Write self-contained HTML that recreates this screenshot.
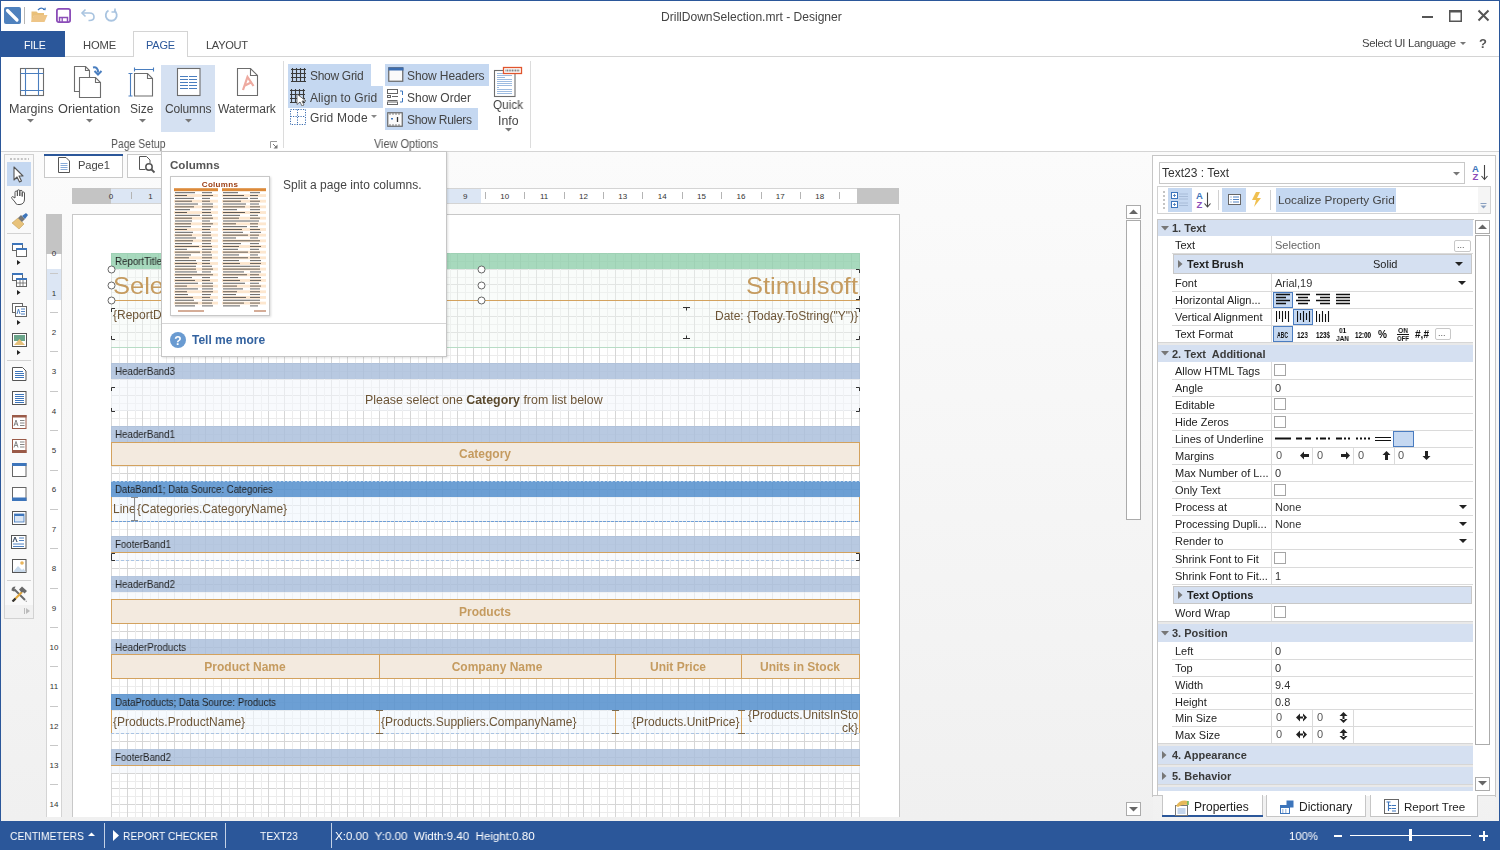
<!DOCTYPE html><html><head><meta charset="utf-8"><style>
html,body{margin:0;padding:0;width:1500px;height:850px;overflow:hidden;background:#fff;}
body{position:relative;font-family:"Liberation Sans",sans-serif;}
.r{position:absolute;box-sizing:border-box;}
.t{position:absolute;white-space:nowrap;line-height:1;will-change:transform;}
svg{shape-rendering:geometricPrecision;}
</style></head><body>
<div class="r" style="left:0px;top:0px;width:1500px;height:1px;background:#2b579a;"></div>
<div class="r" style="left:0px;top:0px;width:1px;height:850px;background:#2b579a;"></div>
<div class="r" style="left:1499px;top:0px;width:1px;height:850px;background:#2b579a;"></div>
<svg class="r" style="left:4px;top:7px;" width="17" height="17" viewBox="0 0 17 17"><rect x="0" y="0" width="17" height="17" rx="2" fill="#4f81bd"/><path d="M3.5 3.5 L13 13" stroke="#fff" stroke-width="3.2" stroke-linecap="round"/><path d="M3 3 L5 4" stroke="#fff" stroke-width="1"/></svg>
<div class="r" style="left:24px;top:7px;width:1px;height:17px;background:#b5b5b5;"></div>
<svg class="r" style="left:30px;top:6px;" width="19" height="17" viewBox="0 0 19 17"><path d="M1.5 5.5 h5 l1.5 1.5 h6 v2.5 h-10 l-2.5 6.5z" fill="#e9c07a"/><path d="M1 16 L4 9 h13.5 l-3 7z" fill="#eec587"/><path d="M8 4 q3 -3.5 6.5 -0.5" stroke="#3d75bb" stroke-width="1.3" fill="none"/><path d="M13 3.5 l2 0.2 l0.2 -2" stroke="#3d75bb" stroke-width="1.2" fill="none"/></svg>
<svg class="r" style="left:56px;top:8px;" width="15" height="15" viewBox="0 0 15 15"><rect x="0.9" y="0.9" width="13.2" height="13.2" rx="1.8" fill="#fff" stroke="#8b4db8" stroke-width="1.8"/><path d="M3.5 14 v-4.5 h8 v4.5" fill="none" stroke="#8b4db8" stroke-width="1.5"/><path d="M6.2 10 v4" stroke="#8b4db8" stroke-width="1.3"/></svg>
<svg class="r" style="left:80px;top:8px;" width="16" height="14" viewBox="0 0 16 14"><path d="M2.5 5 h7 q4.5 0 4.5 4 q0 3.5 -4.5 3.5 h-1" stroke="#a9c4e0" stroke-width="1.6" fill="none"/><path d="M5.5 1.5 L2 5 L5.5 8.5" stroke="#a9c4e0" stroke-width="1.6" fill="none"/></svg>
<svg class="r" style="left:104px;top:8px;" width="15" height="15" viewBox="0 0 15 15"><path d="M10 2.5 A5.5 5.5 0 1 1 4.5 2.5" stroke="#a9c4e0" stroke-width="1.8" fill="none"/><path d="M11 0.5 v3.5 h-3.5" stroke="#a9c4e0" stroke-width="1.6" fill="none"/></svg>
<div class="t" style="left:661px;top:10.80px;font-size:12.05px;color:#444;">DrillDownSelection.mrt - Designer</div>
<div class="r" style="left:1422px;top:16px;width:11px;height:2px;background:#555;"></div>
<svg class="r" style="left:1449px;top:10px;" width="13" height="12" viewBox="0 0 13 12"><rect x="0.75" y="0.75" width="11.5" height="10.5" fill="none" stroke="#555" stroke-width="1.5"/><rect x="0" y="0" width="13" height="2.5" fill="#555"/></svg>
<svg class="r" style="left:1477px;top:9px;" width="13" height="13" viewBox="0 0 13 13"><path d="M1.5 1.5 L11.5 11.5 M11.5 1.5 L1.5 11.5" stroke="#555" stroke-width="2"/></svg>
<div class="r" style="left:1px;top:31px;width:64px;height:26px;background:#2b579a;"></div>
<div class="t" style="left:23.5px;top:40.03px;font-size:10.6px;color:#fff;letter-spacing:-0.2px;">FILE</div>
<div class="t" style="left:82.5px;top:39.52px;font-size:11.2px;color:#444;letter-spacing:-0.1px;">HOME</div>
<div class="r" style="left:65px;top:56px;width:1434px;height:1px;background:#d4d4d4;"></div>
<div class="r" style="left:133px;top:31px;width:55px;height:26px;background:#fff;border:1px solid #d4d4d4;border-bottom:none;"></div>
<div class="t" style="left:145.8px;top:39.69px;font-size:11px;color:#2b579a;letter-spacing:-0.2px;">PAGE</div>
<div class="t" style="left:205.5px;top:39.60px;font-size:11.1px;color:#444;letter-spacing:-0.3px;">LAYOUT</div>
<div class="t" style="left:1362px;top:38.43px;font-size:11.3px;color:#444;letter-spacing:-0.3px;">Select UI Language</div>
<svg class="r" style="left:1460px;top:42px;" width="6" height="4" viewBox="0 0 6 4"><path d="M0 0 h6 l-3 3z" fill="#777"/></svg>
<div class="t" style="left:1478.5px;top:36.50px;font-size:13px;color:#555;font-weight:bold;">?</div>
<div class="r" style="left:1px;top:151px;width:1498px;height:1px;background:#d5d5d5;"></div>
<svg class="r" style="left:19px;top:67px;" width="26" height="31" viewBox="0 0 26 31"><rect x="1.5" y="1.5" width="23" height="27" fill="#fff" stroke="#6d6d6d" stroke-width="1.1"/><path d="M1.5 6.5 h23 M1.5 23.5 h23 M6.5 1.5 v27 M19.5 1.5 v27" stroke="#4a7ebf" stroke-width="1.1"/></svg>
<div class="t" style="left:9px;top:102.84px;font-size:12px;color:#444;transform:scaleX(1.0450);transform-origin:0 0;">Margins</div>
<svg class="r" style="left:27px;top:119px;" width="7" height="4" viewBox="0 0 7 4"><path d="M0 0 h7 l-3.5 3.5z" fill="#777"/></svg>
<svg class="r" style="left:72px;top:66px;" width="33" height="33" viewBox="0 0 33 33"><path d="M2.5 0.5 h11 l4 4 v21 h-15z" fill="#fff" stroke="#6d6d6d" stroke-width="1.1"/><path d="M7.5 11.5 h16 l5 5 v15 h-21z" fill="#fff" stroke="#6d6d6d" stroke-width="1.1"/><path d="M23.5 11.5 v5 h5" fill="none" stroke="#6d6d6d" stroke-width="1.1"/><path d="M13.5 0.5 v4 h4" fill="none" stroke="#6d6d6d" stroke-width="1.1"/><path d="M21 1.5 q5 -1 5 5" fill="none" stroke="#4a7ebf" stroke-width="2"/><path d="M22.5 5 l3.5 3.5 l3.5 -3.5" fill="none" stroke="#4a7ebf" stroke-width="2"/></svg>
<div class="t" style="left:58.3px;top:102.84px;font-size:12px;color:#444;transform:scaleX(1.0597);transform-origin:0 0;">Orientation</div>
<svg class="r" style="left:86px;top:119px;" width="7" height="4" viewBox="0 0 7 4"><path d="M0 0 h7 l-3.5 3.5z" fill="#777"/></svg>
<svg class="r" style="left:128px;top:67px;" width="27" height="31" viewBox="0 0 27 31"><path d="M6.5 6.5 h13 l5 5 v17.5 h-18z" fill="#fff" stroke="#6d6d6d" stroke-width="1.1"/><path d="M19.5 6.5 v5 h5" fill="none" stroke="#6d6d6d" stroke-width="1.1"/><path d="M6.5 2.5 h19 M6.5 0.5 v4 M25.5 0.5 v4 M2.5 6.5 v22.5 M0.5 6.5 h4 M0.5 29 h4" stroke="#4a7ebf" stroke-width="1.1"/></svg>
<div class="t" style="left:130px;top:102.84px;font-size:12px;color:#444;">Size</div>
<svg class="r" style="left:139px;top:119px;" width="7" height="4" viewBox="0 0 7 4"><path d="M0 0 h7 l-3.5 3.5z" fill="#777"/></svg>
<div class="r" style="left:161px;top:65px;width:54px;height:67px;background:#d5e1f2;"></div>
<svg class="r" style="left:176px;top:67px;" width="26" height="30" viewBox="0 0 26 30"><rect x="1.5" y="1.5" width="22.5" height="27" fill="#fff" stroke="#6d6d6d" stroke-width="1.1"/><path d="M4 9.5 h8 M13 9.5 h8 M4 12.5 h8 M13 12.5 h8 M4 15.5 h8 M13 15.5 h8 M4 18.5 h8 M13 18.5 h8 M4 21.5 h8 M13 21.5 h8" stroke="#4a7ebf" stroke-width="1.1"/></svg>
<div class="t" style="left:164.5px;top:102.84px;font-size:12px;color:#444;letter-spacing:-0.15px;">Columns</div>
<svg class="r" style="left:185px;top:119px;" width="7" height="4" viewBox="0 0 7 4"><path d="M0 0 h7 l-3.5 3.5z" fill="#777"/></svg>
<svg class="r" style="left:236px;top:67px;" width="24" height="31" viewBox="0 0 24 31"><path d="M1.5 1.5 h13 l7 7 v20 h-20z" fill="#fff" stroke="#6d6d6d" stroke-width="1.1"/><path d="M14.5 1.5 v7 h7" fill="none" stroke="#6d6d6d" stroke-width="1.1"/><path d="M7 23 L11.5 10 L17.5 19 M8 19 L16 15" fill="none" stroke="#eeaaa0" stroke-width="2.2"/></svg>
<div class="t" style="left:218px;top:102.84px;font-size:12px;color:#444;letter-spacing:-0.05px;">Watermark</div>
<div class="t" style="left:110.5px;top:137.64px;font-size:12px;color:#555;transform:scaleX(0.8690);transform-origin:0 0;">Page Setup</div>
<svg class="r" style="left:270px;top:141px;" width="8" height="8" viewBox="0 0 8 8"><path d="M0.5 7 v-6.5 h6.5" fill="none" stroke="#999" stroke-width="1"/><path d="M3 3 l3.2 3.2" stroke="#777" stroke-width="1"/><path d="M7.5 3.5 v4 h-4z" fill="#777"/></svg>
<div class="r" style="left:283px;top:61px;width:1px;height:87px;background:#dcdcdc;"></div>
<div class="r" style="left:288px;top:64px;width:83px;height:22px;background:#c5d8f1;"></div>
<div class="r" style="left:288px;top:86px;width:95px;height:22px;background:#c5d8f1;"></div>
<div class="r" style="left:385px;top:64px;width:104px;height:22px;background:#c5d8f1;"></div>
<div class="r" style="left:385px;top:108px;width:93px;height:22px;background:#c5d8f1;"></div>
<svg class="r" style="left:291px;top:68px;" width="15" height="14" viewBox="0 0 15 14"><path d="M1.5 0 v14 M5.5 0 v14 M9.5 0 v14 M13.5 0 v14 M0 1.5 h15 M0 5.5 h15 M0 9.5 h15 M0 13.5 h15" stroke="#3a3a3a" stroke-width="1.1"/></svg>
<div class="t" style="left:310px;top:69.84px;font-size:12px;color:#444;letter-spacing:-0.3px;">Show Grid</div>
<svg class="r" style="left:290px;top:89px;" width="18" height="17" viewBox="0 0 18 17"><path d="M1.5 0 v14 M5.5 0 v14 M9.5 0 v14 M13.5 0 v14 M0 1.5 h15 M0 5.5 h15 M0 9.5 h15 M0 13.5 h15" stroke="#3a3a3a" stroke-width="1.1"/><path d="M7 5 v10.5 l3 -2.5 l2 4 l2 -1 l-2 -4 h4z" fill="#fff" stroke="#555" stroke-width="0.8"/></svg>
<div class="t" style="left:310px;top:91.54px;font-size:12px;color:#444;letter-spacing:0.1px;">Align to Grid</div>
<svg class="r" style="left:290px;top:109px;" width="16" height="16" viewBox="0 0 16 16"><rect x="0.5" y="0.5" width="15" height="15" fill="none" stroke="#3a6cb0" stroke-width="1" stroke-dasharray="1.2 1.3"/><path d="M7.5 0.5 v15 M0.5 7.5 h15" stroke="#3a6cb0" stroke-width="1" stroke-dasharray="1.2 1.3"/></svg>
<div class="t" style="left:309.5px;top:111.54px;font-size:12px;color:#444;letter-spacing:0.2px;">Grid Mode</div>
<svg class="r" style="left:371px;top:115px;" width="6" height="4" viewBox="0 0 6 4"><path d="M0 0 h6 l-3 3z" fill="#888"/></svg>
<svg class="r" style="left:388px;top:67px;" width="16" height="15" viewBox="0 0 16 15"><rect x="0.75" y="0.75" width="14" height="13.5" fill="#fafafa" stroke="#666" stroke-width="1.2"/><rect x="0.5" y="0.5" width="15" height="3" fill="#3a6cb0"/></svg>
<div class="t" style="left:407px;top:69.84px;font-size:12px;color:#444;letter-spacing:-0.1px;">Show Headers</div>
<svg class="r" style="left:387px;top:89px;" width="17" height="16" viewBox="0 0 17 16"><rect x="0.5" y="0.5" width="10" height="4" fill="none" stroke="#666" stroke-width="1"/><rect x="0.5" y="6.5" width="3" height="2" fill="none" stroke="#666" stroke-width="1"/><path d="M5 7.5 h6 M0.5 11.5 h10" stroke="#666" stroke-width="1"/><rect x="0.5" y="13" width="10" height="2.5" fill="none" stroke="#666" stroke-width="1"/><path d="M13 2 h2.5 v4 M15.5 9 v4 h-2.5" stroke="#3a75bd" stroke-width="1" fill="none"/></svg>
<div class="t" style="left:407px;top:91.54px;font-size:12px;color:#444;letter-spacing:0px;">Show Order</div>
<svg class="r" style="left:387px;top:112px;" width="16" height="15" viewBox="0 0 16 15"><rect x="0.75" y="0.75" width="14.5" height="13.5" fill="#fafafa" stroke="#666" stroke-width="1.2"/><path d="M3 1 v2 M6 1 v2 M9 1 v2 M12 1 v2 M3 14 v-2 M6 14 v-2 M9 14 v-2 M12 14 v-2" stroke="#666" stroke-width="0.8"/><rect x="4" y="6" width="2" height="1.5" fill="#3a75bd"/><path d="M10.5 5 v5" stroke="#333" stroke-width="1.3"/></svg>
<div class="t" style="left:407px;top:113.64px;font-size:12px;color:#444;letter-spacing:-0.3px;">Show Rulers</div>
<svg class="r" style="left:493px;top:66px;" width="31" height="32" viewBox="0 0 31 32"><rect x="1.5" y="4.5" width="20.5" height="26" fill="#fff" stroke="#6d6d6d" stroke-width="1.1"/><path d="M4 7.5 h15 M4 9.5 h15 M4 11.5 h8 M4 13.5 h15 M4 15.5 h15 M4 17.5 h15 M4 19.5 h15 M4 21.5 h2 M4 23.5 h15 M4 25.5 h15 M4 27.5 h15 " stroke="#9dbbe0" stroke-width="1"/><rect x="10.5" y="1.5" width="18" height="6" fill="#fff" stroke="#e0552d" stroke-width="1.3"/><path d="M12.5 4.5 h14" stroke="#777" stroke-width="2.2" stroke-dasharray="1 0.6"/></svg>
<div class="t" style="left:493.3px;top:98.84px;font-size:12px;color:#444;transform:scaleX(0.9780);transform-origin:0 0;">Quick</div>
<div class="t" style="left:497.5px;top:114.74px;font-size:12px;color:#444;transform:scaleX(1.0242);transform-origin:0 0;">Info</div>
<svg class="r" style="left:505px;top:128px;" width="7" height="4" viewBox="0 0 7 4"><path d="M0 0 h7 l-3.5 3.5z" fill="#777"/></svg>
<div class="t" style="left:374px;top:137.64px;font-size:12px;color:#555;transform:scaleX(0.9080);transform-origin:0 0;">View Options</div>
<div class="r" style="left:530px;top:61px;width:1px;height:87px;background:#dcdcdc;"></div>
<div class="r" style="left:1px;top:152px;width:1498px;height:669px;background:linear-gradient(#fbfbfb,#f0f0f0);"></div>
<div class="r" style="left:4px;top:154px;width:30px;height:465px;background:#f9f9f9;border:1px solid #d2d2d2;"></div>
<div class="r" style="left:5px;top:605px;width:28px;height:13px;background:#f1f1f1;"></div>
<svg class="r" style="left:10px;top:158px;" width="19" height="3" viewBox="0 0 19 3"><rect x="0.0" y="0" width="2" height="2" fill="#c4c4c4"/><rect x="3.6" y="0" width="2" height="2" fill="#c4c4c4"/><rect x="7.2" y="0" width="2" height="2" fill="#c4c4c4"/><rect x="10.8" y="0" width="2" height="2" fill="#c4c4c4"/><rect x="14.4" y="0" width="2" height="2" fill="#c4c4c4"/><rect x="18.0" y="0" width="2" height="2" fill="#c4c4c4"/></svg>
<div class="r" style="left:7px;top:162px;width:24px;height:24px;background:#c5d8f1;"></div>
<svg class="r" style="left:13px;top:166px;" width="11" height="17" viewBox="0 0 11 17"><path d="M1 1 v13 l3 -3 l2.5 5 l2 -1 l-2.5 -5 h4z" fill="#fff" stroke="#555" stroke-width="1.1" stroke-linejoin="round"/></svg>
<svg class="r" style="left:10px;top:189px;" width="17" height="17" viewBox="0 0 17 17"><path d="M5 13 L2 9.5 Q1 8 2.5 7.5 L5 9 V3.5 Q5 2 6.2 2 Q7.4 2 7.4 3.5 V7 V2 Q7.4 0.8 8.6 0.8 Q9.8 0.8 9.8 2 V7 V2.5 Q9.8 1.3 11 1.3 Q12.2 1.3 12.2 2.5 V7.5 V4 Q12.2 3 13.3 3 Q14.5 3 14.5 4 V10 Q14.5 15 10 15.5 H7.5 Q6 15.5 5 13 Z" fill="#fff" stroke="#555" stroke-width="1" stroke-linejoin="round"/></svg>
<svg class="r" style="left:10px;top:212px;" width="19" height="18" viewBox="0 0 19 18"><path d="M2 11 l6 -5 l6 6 l-5 5z" fill="#e8c27a" stroke="#b8964e" stroke-width="0.5"/><path d="M8 6 l3 -3 l4 4 l-3 3z" fill="#777"/><path d="M12 4 l4 -3 l2 2 l-3 4z" fill="#3d75bb"/></svg>
<div class="r" style="left:7px;top:233px;width:24px;height:1px;background:#d2d2d2;"></div>
<svg class="r" style="left:12px;top:243px;" width="15" height="14" viewBox="0 0 15 14"><rect x="0.5" y="0.5" width="10" height="7" fill="#fff" stroke="#666"/><rect x="0" y="0" width="11" height="2" fill="#3d75bb"/><rect x="4.5" y="5.5" width="10" height="8" fill="#fff" stroke="#666"/><rect x="4" y="5" width="11" height="2" fill="#3d75bb"/></svg>
<svg class="r" style="left:17px;top:260px;" width="4" height="5" viewBox="0 0 4 5"><path d="M0 0 l3.5 2.5 l-3.5 2.5z" fill="#222"/></svg>
<svg class="r" style="left:12px;top:273px;" width="15" height="14" viewBox="0 0 15 14"><rect x="0.5" y="0.5" width="10" height="7" fill="#fff" stroke="#666"/><rect x="0" y="0" width="11" height="2" fill="#3d75bb"/><rect x="4.5" y="5.5" width="10" height="8" fill="#fff" stroke="#666"/><rect x="4" y="5" width="11" height="2" fill="#3d75bb"/><path d="M4.5 10 h10 M8 7 v6 M11 7 v6" stroke="#666" stroke-width="0.8"/></svg>
<svg class="r" style="left:17px;top:290px;" width="4" height="5" viewBox="0 0 4 5"><path d="M0 0 l3.5 2.5 l-3.5 2.5z" fill="#222"/></svg>
<svg class="r" style="left:12px;top:303px;" width="15" height="14" viewBox="0 0 15 14"><rect x="0.5" y="0.5" width="10" height="9" fill="#fff" stroke="#666"/><rect x="3.5" y="3.5" width="11" height="10" fill="#fff" stroke="#666"/><path d="M5 11 l1.5 -5 l1.5 5 M9 6 h4 M9 8.5 h4 M9 11 h4" stroke="#3d75bb" stroke-width="0.9" fill="none"/></svg>
<svg class="r" style="left:17px;top:320px;" width="4" height="5" viewBox="0 0 4 5"><path d="M0 0 l3.5 2.5 l-3.5 2.5z" fill="#222"/></svg>
<svg class="r" style="left:12px;top:333px;" width="15" height="14" viewBox="0 0 15 14"><rect x="0.5" y="0.5" width="14" height="13" fill="#fff" stroke="#555"/><rect x="2" y="2" width="11" height="6" fill="#6aa58a"/><path d="M2 12 l5.5 -6 l5.5 6z" fill="#e5c07a"/></svg>
<svg class="r" style="left:17px;top:350px;" width="4" height="5" viewBox="0 0 4 5"><path d="M0 0 l3.5 2.5 l-3.5 2.5z" fill="#222"/></svg>
<div class="r" style="left:7px;top:360px;width:24px;height:1px;background:#d2d2d2;"></div>
<svg class="r" style="left:12px;top:367px;" width="15" height="14" viewBox="0 0 15 14"><path d="M0.5 0.5 h10 l3.5 3.5 v9.5 h-13.5z" fill="#fff" stroke="#555"/><path d="M3 4.5 h8 M3 6.5 h9 M3 8.5 h9 M3 10.5 h9" stroke="#3d75bb" stroke-width="1"/></svg>
<svg class="r" style="left:12px;top:391px;" width="15" height="14" viewBox="0 0 15 14"><rect x="0.5" y="0.5" width="13.5" height="13" fill="#fff" stroke="#555"/><path d="M3 3.5 h9 M3 5.5 h9 M3 7.5 h9 M3 9.5 h9 M3 11.5 h9" stroke="#3d75bb" stroke-width="1"/></svg>
<svg class="r" style="left:12px;top:415px;" width="15" height="14" viewBox="0 0 15 14"><rect x="0.5" y="0.5" width="13.5" height="13" fill="#fff" stroke="#9a5a48"/><rect x="0" y="0" width="14.5" height="2.5" fill="#9a5a48"/><path d="M2 11 l2 -6 l2 6 M2.8 9 h2.4 M8 5.5 h4.5 M8 8 h4.5 M8 10.5 h4.5" stroke="#777" stroke-width="0.9" fill="none"/></svg>
<svg class="r" style="left:12px;top:439px;" width="15" height="14" viewBox="0 0 15 14"><rect x="0.5" y="0.5" width="13.5" height="13" fill="#fff" stroke="#9a5a48"/><rect x="0" y="11" width="14.5" height="3" fill="#9a5a48"/><path d="M2 8.5 l2 -6 l2 6 M2.8 6.5 h2.4 M8 3 h4.5 M8 5.5 h4.5 M8 8 h4.5" stroke="#777" stroke-width="0.9" fill="none"/></svg>
<svg class="r" style="left:12px;top:463px;" width="15" height="14" viewBox="0 0 15 14"><rect x="0.5" y="0.5" width="13.5" height="13" fill="#fff" stroke="#666"/><rect x="0" y="0" width="14.5" height="3" fill="#3d75bb"/></svg>
<svg class="r" style="left:12px;top:487px;" width="15" height="14" viewBox="0 0 15 14"><rect x="0.5" y="0.5" width="13.5" height="13" fill="#fff" stroke="#666"/><rect x="0" y="10.5" width="14.5" height="3.5" fill="#3d75bb"/></svg>
<svg class="r" style="left:12px;top:511px;" width="15" height="14" viewBox="0 0 15 14"><rect x="0.5" y="0.5" width="13.5" height="13" fill="#fff" stroke="#555"/><rect x="2.5" y="3" width="9.5" height="8" fill="#dbe6f4" stroke="#3d75bb" stroke-width="0.8"/><rect x="2.5" y="3" width="9.5" height="2" fill="#3d75bb"/></svg>
<svg class="r" style="left:11px;top:535px;" width="16" height="14" viewBox="0 0 16 14"><rect x="0.5" y="0.5" width="14.5" height="13" fill="#fff" stroke="#555"/><path d="M2 7 l2 -5 l2 5 M8 3 h5 M8 5.5 h5 M2 9 h11 M2 11.5 h11" stroke="#3d75bb" stroke-width="0.9" fill="none"/><path d="M2 7 l2 -5 l2 5" stroke="#555" stroke-width="0.9" fill="none"/></svg>
<svg class="r" style="left:12px;top:559px;" width="15" height="14" viewBox="0 0 15 14"><rect x="0.5" y="0.5" width="13.5" height="13" fill="#fff" stroke="#555"/><circle cx="10" cy="4" r="1.8" fill="#e9b45a"/><path d="M1 13 l5 -6 l4 4 l1.5 -1.5 l2.5 3.5z" fill="#c7d8ea"/></svg>
<div class="r" style="left:7px;top:580px;width:24px;height:1px;background:#d2d2d2;"></div>
<svg class="r" style="left:11px;top:586px;" width="17" height="16" viewBox="0 0 17 16"><path d="M3.5 3.5 L14 14" stroke="#6a6a6a" stroke-width="2"/><path d="M0.5 4.5 A4 4 0 0 1 4.5 0.5 L3.5 3 L5 4.5 L3 5.5z" fill="#6a6a6a"/><path d="M14.5 14.5 l1.5 0.5 l-1 1z" fill="#6a6a6a"/><path d="M2 15 L11 6" stroke="#e3a83e" stroke-width="2.2"/><path d="M1.5 15.5 L4.5 12.5" stroke="#333" stroke-width="2.2"/><path d="M8 3.5 L11 0.5 L16 5 L13.5 7.5 L12 6 L10.5 6.5z" fill="#6a6a6a"/></svg>
<svg class="r" style="left:24px;top:608px;" width="6" height="6" viewBox="0 0 6 6"><path d="M0.5 0 v6" stroke="#bbb"/><path d="M2 0 l4 3 l-4 3z" fill="#bbb"/></svg>
<div class="r" style="left:44px;top:154px;width:79px;height:24px;background:#fff;border:1px solid #c9c9c9;"></div>
<div class="r" style="left:44px;top:154px;width:79px;height:2px;background:#2b579a;"></div>
<svg class="r" style="left:58px;top:157px;" width="12" height="16" viewBox="0 0 12 16"><path d="M0.5 0.5 h7.5 l3.5 3.5 v11.5 h-11z" fill="#fff" stroke="#555"/><path d="M2.5 6.5 h7 M2.5 8.5 h7 M2.5 10.5 h7 M2.5 12.5 h7" stroke="#7aa2d4" stroke-width="0.9"/></svg>
<div class="t" style="left:77.5px;top:160.02px;font-size:11.2px;color:#444;letter-spacing:-0.1px;">Page1</div>
<div class="r" style="left:127px;top:154px;width:40px;height:24px;background:#fff;border:1px solid #c9c9c9;"></div>
<svg class="r" style="left:139px;top:156px;" width="17" height="18" viewBox="0 0 17 18"><path d="M0.5 0.5 h7 l3.5 3.5 v3" fill="none" stroke="#555"/><path d="M0.5 0.5 v13 h6" fill="none" stroke="#555"/><circle cx="10" cy="11" r="3.2" fill="none" stroke="#555" stroke-width="1.5"/><path d="M12.5 13.5 l3 3" stroke="#555" stroke-width="1.8"/></svg>
<div class="r" style="left:72px;top:188px;width:827px;height:16px;background:#fff;border:1px solid #d4d4d4;"></div>
<div class="r" style="left:72px;top:188px;width:39px;height:16px;background:#c4c4c4;"></div>
<div class="r" style="left:857px;top:188px;width:42px;height:16px;background:#c4c4c4;"></div>
<div class="r" style="left:111px;top:189px;width:370px;height:14px;background:#dce6f4;"></div>
<svg class="r" style="left:72px;top:188px;" width="789" height="16" viewBox="0 0 789 16"><text x="39.0" y="10.5" font-size="8" text-anchor="middle" fill="#333" font-family="Liberation Sans">0</text><path d="M59.5 4 v7" stroke="#b4b4b4" stroke-width="1"/><text x="78.4" y="10.5" font-size="8" text-anchor="middle" fill="#333" font-family="Liberation Sans">1</text><path d="M98.5 4 v7" stroke="#b4b4b4" stroke-width="1"/><text x="117.7" y="10.5" font-size="8" text-anchor="middle" fill="#333" font-family="Liberation Sans">2</text><path d="M137.5 4 v7" stroke="#b4b4b4" stroke-width="1"/><text x="157.1" y="10.5" font-size="8" text-anchor="middle" fill="#333" font-family="Liberation Sans">3</text><path d="M177.5 4 v7" stroke="#b4b4b4" stroke-width="1"/><text x="196.5" y="10.5" font-size="8" text-anchor="middle" fill="#333" font-family="Liberation Sans">4</text><path d="M216.5 4 v7" stroke="#b4b4b4" stroke-width="1"/><text x="235.9" y="10.5" font-size="8" text-anchor="middle" fill="#333" font-family="Liberation Sans">5</text><path d="M256.5 4 v7" stroke="#b4b4b4" stroke-width="1"/><text x="275.2" y="10.5" font-size="8" text-anchor="middle" fill="#333" font-family="Liberation Sans">6</text><path d="M295.5 4 v7" stroke="#b4b4b4" stroke-width="1"/><text x="314.6" y="10.5" font-size="8" text-anchor="middle" fill="#333" font-family="Liberation Sans">7</text><path d="M334.5 4 v7" stroke="#b4b4b4" stroke-width="1"/><text x="354.0" y="10.5" font-size="8" text-anchor="middle" fill="#333" font-family="Liberation Sans">8</text><path d="M374.5 4 v7" stroke="#b4b4b4" stroke-width="1"/><text x="393.3" y="10.5" font-size="8" text-anchor="middle" fill="#333" font-family="Liberation Sans">9</text><path d="M413.5 4 v7" stroke="#b4b4b4" stroke-width="1"/><text x="432.7" y="10.5" font-size="8" text-anchor="middle" fill="#333" font-family="Liberation Sans">10</text><path d="M452.5 4 v7" stroke="#b4b4b4" stroke-width="1"/><text x="472.1" y="10.5" font-size="8" text-anchor="middle" fill="#333" font-family="Liberation Sans">11</text><path d="M492.5 4 v7" stroke="#b4b4b4" stroke-width="1"/><text x="511.4" y="10.5" font-size="8" text-anchor="middle" fill="#333" font-family="Liberation Sans">12</text><path d="M531.5 4 v7" stroke="#b4b4b4" stroke-width="1"/><text x="550.8" y="10.5" font-size="8" text-anchor="middle" fill="#333" font-family="Liberation Sans">13</text><path d="M570.5 4 v7" stroke="#b4b4b4" stroke-width="1"/><text x="590.2" y="10.5" font-size="8" text-anchor="middle" fill="#333" font-family="Liberation Sans">14</text><path d="M610.5 4 v7" stroke="#b4b4b4" stroke-width="1"/><text x="629.5" y="10.5" font-size="8" text-anchor="middle" fill="#333" font-family="Liberation Sans">15</text><path d="M649.5 4 v7" stroke="#b4b4b4" stroke-width="1"/><text x="668.9" y="10.5" font-size="8" text-anchor="middle" fill="#333" font-family="Liberation Sans">16</text><path d="M689.5 4 v7" stroke="#b4b4b4" stroke-width="1"/><text x="708.3" y="10.5" font-size="8" text-anchor="middle" fill="#333" font-family="Liberation Sans">17</text><path d="M728.5 4 v7" stroke="#b4b4b4" stroke-width="1"/><text x="747.7" y="10.5" font-size="8" text-anchor="middle" fill="#333" font-family="Liberation Sans">18</text><path d="M767.5 4 v7" stroke="#b4b4b4" stroke-width="1"/></svg>
<div class="r" style="left:46px;top:214px;width:16px;height:603px;background:#fff;border:1px solid #d4d4d4;border-bottom:none;"></div>
<div class="r" style="left:46px;top:214px;width:16px;height:40px;background:#c4c4c4;"></div>
<div class="r" style="left:47px;top:269px;width:14px;height:31px;background:#dce6f4;"></div>
<svg class="r" style="left:46px;top:214px;" width="16" height="603" viewBox="0 0 16 603"><text x="8" y="42.2" font-size="8" text-anchor="middle" fill="#333" font-family="Liberation Sans">0</text><path d="M4 59.5 h8" stroke="#c8c8c8" stroke-width="1"/><text x="8" y="81.6" font-size="8" text-anchor="middle" fill="#333" font-family="Liberation Sans">1</text><path d="M4 98.5 h8" stroke="#c8c8c8" stroke-width="1"/><text x="8" y="120.9" font-size="8" text-anchor="middle" fill="#333" font-family="Liberation Sans">2</text><path d="M4 137.5 h8" stroke="#c8c8c8" stroke-width="1"/><text x="8" y="160.3" font-size="8" text-anchor="middle" fill="#333" font-family="Liberation Sans">3</text><path d="M4 177.5 h8" stroke="#c8c8c8" stroke-width="1"/><text x="8" y="199.7" font-size="8" text-anchor="middle" fill="#333" font-family="Liberation Sans">4</text><path d="M4 216.5 h8" stroke="#c8c8c8" stroke-width="1"/><text x="8" y="239.1" font-size="8" text-anchor="middle" fill="#333" font-family="Liberation Sans">5</text><path d="M4 256.5 h8" stroke="#c8c8c8" stroke-width="1"/><text x="8" y="278.4" font-size="8" text-anchor="middle" fill="#333" font-family="Liberation Sans">6</text><path d="M4 295.5 h8" stroke="#c8c8c8" stroke-width="1"/><text x="8" y="317.8" font-size="8" text-anchor="middle" fill="#333" font-family="Liberation Sans">7</text><path d="M4 334.5 h8" stroke="#c8c8c8" stroke-width="1"/><text x="8" y="357.2" font-size="8" text-anchor="middle" fill="#333" font-family="Liberation Sans">8</text><path d="M4 374.5 h8" stroke="#c8c8c8" stroke-width="1"/><text x="8" y="396.5" font-size="8" text-anchor="middle" fill="#333" font-family="Liberation Sans">9</text><path d="M4 413.5 h8" stroke="#c8c8c8" stroke-width="1"/><text x="8" y="435.9" font-size="8" text-anchor="middle" fill="#333" font-family="Liberation Sans">10</text><path d="M4 452.5 h8" stroke="#c8c8c8" stroke-width="1"/><text x="8" y="475.3" font-size="8" text-anchor="middle" fill="#333" font-family="Liberation Sans">11</text><path d="M4 492.5 h8" stroke="#c8c8c8" stroke-width="1"/><text x="8" y="514.6" font-size="8" text-anchor="middle" fill="#333" font-family="Liberation Sans">12</text><path d="M4 531.5 h8" stroke="#c8c8c8" stroke-width="1"/><text x="8" y="554.0" font-size="8" text-anchor="middle" fill="#333" font-family="Liberation Sans">13</text><path d="M4 570.5 h8" stroke="#c8c8c8" stroke-width="1"/><text x="8" y="593.4" font-size="8" text-anchor="middle" fill="#333" font-family="Liberation Sans">14</text><path d="M4 610.5 h8" stroke="#c8c8c8" stroke-width="1"/></svg>
<div class="r" style="left:72px;top:214px;width:828px;height:603px;background:#fff;border:1px solid #c8c8c8;border-bottom:none;"></div>
<svg class="r" style="left:111px;top:253px;shape-rendering:crispEdges;" width="749" height="564" viewBox="0 0 749 564"><path d="M0 0.5 h749" stroke="#d6d6d6" stroke-width="1"/><path d="M0 8.5 h749" stroke="#ececec" stroke-width="1"/><path d="M0 16.5 h749" stroke="#d6d6d6" stroke-width="1"/><path d="M0 24.5 h749" stroke="#ececec" stroke-width="1"/><path d="M0 31.5 h749" stroke="#d6d6d6" stroke-width="1"/><path d="M0 39.5 h749" stroke="#ececec" stroke-width="1"/><path d="M0 47.5 h749" stroke="#d6d6d6" stroke-width="1"/><path d="M0 55.5 h749" stroke="#ececec" stroke-width="1"/><path d="M0 63.5 h749" stroke="#d6d6d6" stroke-width="1"/><path d="M0 71.5 h749" stroke="#ececec" stroke-width="1"/><path d="M0 79.5 h749" stroke="#d6d6d6" stroke-width="1"/><path d="M0 87.5 h749" stroke="#ececec" stroke-width="1"/><path d="M0 94.5 h749" stroke="#d6d6d6" stroke-width="1"/><path d="M0 102.5 h749" stroke="#ececec" stroke-width="1"/><path d="M0 110.5 h749" stroke="#d6d6d6" stroke-width="1"/><path d="M0 118.5 h749" stroke="#ececec" stroke-width="1"/><path d="M0 126.5 h749" stroke="#d6d6d6" stroke-width="1"/><path d="M0 134.5 h749" stroke="#ececec" stroke-width="1"/><path d="M0 142.5 h749" stroke="#d6d6d6" stroke-width="1"/><path d="M0 150.5 h749" stroke="#ececec" stroke-width="1"/><path d="M0 157.5 h749" stroke="#d6d6d6" stroke-width="1"/><path d="M0 165.5 h749" stroke="#ececec" stroke-width="1"/><path d="M0 173.5 h749" stroke="#d6d6d6" stroke-width="1"/><path d="M0 181.5 h749" stroke="#ececec" stroke-width="1"/><path d="M0 189.5 h749" stroke="#d6d6d6" stroke-width="1"/><path d="M0 197.5 h749" stroke="#ececec" stroke-width="1"/><path d="M0 205.5 h749" stroke="#d6d6d6" stroke-width="1"/><path d="M0 213.5 h749" stroke="#ececec" stroke-width="1"/><path d="M0 220.5 h749" stroke="#d6d6d6" stroke-width="1"/><path d="M0 228.5 h749" stroke="#ececec" stroke-width="1"/><path d="M0 236.5 h749" stroke="#d6d6d6" stroke-width="1"/><path d="M0 244.5 h749" stroke="#ececec" stroke-width="1"/><path d="M0 252.5 h749" stroke="#d6d6d6" stroke-width="1"/><path d="M0 260.5 h749" stroke="#ececec" stroke-width="1"/><path d="M0 268.5 h749" stroke="#d6d6d6" stroke-width="1"/><path d="M0 276.5 h749" stroke="#ececec" stroke-width="1"/><path d="M0 283.5 h749" stroke="#d6d6d6" stroke-width="1"/><path d="M0 291.5 h749" stroke="#ececec" stroke-width="1"/><path d="M0 299.5 h749" stroke="#d6d6d6" stroke-width="1"/><path d="M0 307.5 h749" stroke="#ececec" stroke-width="1"/><path d="M0 315.5 h749" stroke="#d6d6d6" stroke-width="1"/><path d="M0 323.5 h749" stroke="#ececec" stroke-width="1"/><path d="M0 331.5 h749" stroke="#d6d6d6" stroke-width="1"/><path d="M0 339.5 h749" stroke="#ececec" stroke-width="1"/><path d="M0 346.5 h749" stroke="#d6d6d6" stroke-width="1"/><path d="M0 354.5 h749" stroke="#ececec" stroke-width="1"/><path d="M0 362.5 h749" stroke="#d6d6d6" stroke-width="1"/><path d="M0 370.5 h749" stroke="#ececec" stroke-width="1"/><path d="M0 378.5 h749" stroke="#d6d6d6" stroke-width="1"/><path d="M0 386.5 h749" stroke="#ececec" stroke-width="1"/><path d="M0 394.5 h749" stroke="#d6d6d6" stroke-width="1"/><path d="M0 402.5 h749" stroke="#ececec" stroke-width="1"/><path d="M0 409.5 h749" stroke="#d6d6d6" stroke-width="1"/><path d="M0 417.5 h749" stroke="#ececec" stroke-width="1"/><path d="M0 425.5 h749" stroke="#d6d6d6" stroke-width="1"/><path d="M0 433.5 h749" stroke="#ececec" stroke-width="1"/><path d="M0 441.5 h749" stroke="#d6d6d6" stroke-width="1"/><path d="M0 449.5 h749" stroke="#ececec" stroke-width="1"/><path d="M0 457.5 h749" stroke="#d6d6d6" stroke-width="1"/><path d="M0 465.5 h749" stroke="#ececec" stroke-width="1"/><path d="M0 472.5 h749" stroke="#d6d6d6" stroke-width="1"/><path d="M0 480.5 h749" stroke="#ececec" stroke-width="1"/><path d="M0 488.5 h749" stroke="#d6d6d6" stroke-width="1"/><path d="M0 496.5 h749" stroke="#ececec" stroke-width="1"/><path d="M0 504.5 h749" stroke="#d6d6d6" stroke-width="1"/><path d="M0 512.5 h749" stroke="#ececec" stroke-width="1"/><path d="M0 520.5 h749" stroke="#d6d6d6" stroke-width="1"/><path d="M0 528.5 h749" stroke="#ececec" stroke-width="1"/><path d="M0 535.5 h749" stroke="#d6d6d6" stroke-width="1"/><path d="M0 543.5 h749" stroke="#ececec" stroke-width="1"/><path d="M0 551.5 h749" stroke="#d6d6d6" stroke-width="1"/><path d="M0 559.5 h749" stroke="#ececec" stroke-width="1"/><path d="M0.5 0 v564" stroke="#d6d6d6" stroke-width="1"/><path d="M8.5 0 v564" stroke="#ececec" stroke-width="1"/><path d="M16.5 0 v564" stroke="#d6d6d6" stroke-width="1"/><path d="M24.5 0 v564" stroke="#ececec" stroke-width="1"/><path d="M31.5 0 v564" stroke="#d6d6d6" stroke-width="1"/><path d="M39.5 0 v564" stroke="#ececec" stroke-width="1"/><path d="M47.5 0 v564" stroke="#d6d6d6" stroke-width="1"/><path d="M55.5 0 v564" stroke="#ececec" stroke-width="1"/><path d="M63.5 0 v564" stroke="#d6d6d6" stroke-width="1"/><path d="M71.5 0 v564" stroke="#ececec" stroke-width="1"/><path d="M79.5 0 v564" stroke="#d6d6d6" stroke-width="1"/><path d="M87.5 0 v564" stroke="#ececec" stroke-width="1"/><path d="M94.5 0 v564" stroke="#d6d6d6" stroke-width="1"/><path d="M102.5 0 v564" stroke="#ececec" stroke-width="1"/><path d="M110.5 0 v564" stroke="#d6d6d6" stroke-width="1"/><path d="M118.5 0 v564" stroke="#ececec" stroke-width="1"/><path d="M126.5 0 v564" stroke="#d6d6d6" stroke-width="1"/><path d="M134.5 0 v564" stroke="#ececec" stroke-width="1"/><path d="M142.5 0 v564" stroke="#d6d6d6" stroke-width="1"/><path d="M150.5 0 v564" stroke="#ececec" stroke-width="1"/><path d="M157.5 0 v564" stroke="#d6d6d6" stroke-width="1"/><path d="M165.5 0 v564" stroke="#ececec" stroke-width="1"/><path d="M173.5 0 v564" stroke="#d6d6d6" stroke-width="1"/><path d="M181.5 0 v564" stroke="#ececec" stroke-width="1"/><path d="M189.5 0 v564" stroke="#d6d6d6" stroke-width="1"/><path d="M197.5 0 v564" stroke="#ececec" stroke-width="1"/><path d="M205.5 0 v564" stroke="#d6d6d6" stroke-width="1"/><path d="M213.5 0 v564" stroke="#ececec" stroke-width="1"/><path d="M220.5 0 v564" stroke="#d6d6d6" stroke-width="1"/><path d="M228.5 0 v564" stroke="#ececec" stroke-width="1"/><path d="M236.5 0 v564" stroke="#d6d6d6" stroke-width="1"/><path d="M244.5 0 v564" stroke="#ececec" stroke-width="1"/><path d="M252.5 0 v564" stroke="#d6d6d6" stroke-width="1"/><path d="M260.5 0 v564" stroke="#ececec" stroke-width="1"/><path d="M268.5 0 v564" stroke="#d6d6d6" stroke-width="1"/><path d="M276.5 0 v564" stroke="#ececec" stroke-width="1"/><path d="M283.5 0 v564" stroke="#d6d6d6" stroke-width="1"/><path d="M291.5 0 v564" stroke="#ececec" stroke-width="1"/><path d="M299.5 0 v564" stroke="#d6d6d6" stroke-width="1"/><path d="M307.5 0 v564" stroke="#ececec" stroke-width="1"/><path d="M315.5 0 v564" stroke="#d6d6d6" stroke-width="1"/><path d="M323.5 0 v564" stroke="#ececec" stroke-width="1"/><path d="M331.5 0 v564" stroke="#d6d6d6" stroke-width="1"/><path d="M339.5 0 v564" stroke="#ececec" stroke-width="1"/><path d="M346.5 0 v564" stroke="#d6d6d6" stroke-width="1"/><path d="M354.5 0 v564" stroke="#ececec" stroke-width="1"/><path d="M362.5 0 v564" stroke="#d6d6d6" stroke-width="1"/><path d="M370.5 0 v564" stroke="#ececec" stroke-width="1"/><path d="M378.5 0 v564" stroke="#d6d6d6" stroke-width="1"/><path d="M386.5 0 v564" stroke="#ececec" stroke-width="1"/><path d="M394.5 0 v564" stroke="#d6d6d6" stroke-width="1"/><path d="M402.5 0 v564" stroke="#ececec" stroke-width="1"/><path d="M409.5 0 v564" stroke="#d6d6d6" stroke-width="1"/><path d="M417.5 0 v564" stroke="#ececec" stroke-width="1"/><path d="M425.5 0 v564" stroke="#d6d6d6" stroke-width="1"/><path d="M433.5 0 v564" stroke="#ececec" stroke-width="1"/><path d="M441.5 0 v564" stroke="#d6d6d6" stroke-width="1"/><path d="M449.5 0 v564" stroke="#ececec" stroke-width="1"/><path d="M457.5 0 v564" stroke="#d6d6d6" stroke-width="1"/><path d="M465.5 0 v564" stroke="#ececec" stroke-width="1"/><path d="M472.5 0 v564" stroke="#d6d6d6" stroke-width="1"/><path d="M480.5 0 v564" stroke="#ececec" stroke-width="1"/><path d="M488.5 0 v564" stroke="#d6d6d6" stroke-width="1"/><path d="M496.5 0 v564" stroke="#ececec" stroke-width="1"/><path d="M504.5 0 v564" stroke="#d6d6d6" stroke-width="1"/><path d="M512.5 0 v564" stroke="#ececec" stroke-width="1"/><path d="M520.5 0 v564" stroke="#d6d6d6" stroke-width="1"/><path d="M528.5 0 v564" stroke="#ececec" stroke-width="1"/><path d="M535.5 0 v564" stroke="#d6d6d6" stroke-width="1"/><path d="M543.5 0 v564" stroke="#ececec" stroke-width="1"/><path d="M551.5 0 v564" stroke="#d6d6d6" stroke-width="1"/><path d="M559.5 0 v564" stroke="#ececec" stroke-width="1"/><path d="M567.5 0 v564" stroke="#d6d6d6" stroke-width="1"/><path d="M575.5 0 v564" stroke="#ececec" stroke-width="1"/><path d="M583.5 0 v564" stroke="#d6d6d6" stroke-width="1"/><path d="M591.5 0 v564" stroke="#ececec" stroke-width="1"/><path d="M598.5 0 v564" stroke="#d6d6d6" stroke-width="1"/><path d="M606.5 0 v564" stroke="#ececec" stroke-width="1"/><path d="M614.5 0 v564" stroke="#d6d6d6" stroke-width="1"/><path d="M622.5 0 v564" stroke="#ececec" stroke-width="1"/><path d="M630.5 0 v564" stroke="#d6d6d6" stroke-width="1"/><path d="M638.5 0 v564" stroke="#ececec" stroke-width="1"/><path d="M646.5 0 v564" stroke="#d6d6d6" stroke-width="1"/><path d="M654.5 0 v564" stroke="#ececec" stroke-width="1"/><path d="M661.5 0 v564" stroke="#d6d6d6" stroke-width="1"/><path d="M669.5 0 v564" stroke="#ececec" stroke-width="1"/><path d="M677.5 0 v564" stroke="#d6d6d6" stroke-width="1"/><path d="M685.5 0 v564" stroke="#ececec" stroke-width="1"/><path d="M693.5 0 v564" stroke="#d6d6d6" stroke-width="1"/><path d="M701.5 0 v564" stroke="#ececec" stroke-width="1"/><path d="M709.5 0 v564" stroke="#d6d6d6" stroke-width="1"/><path d="M717.5 0 v564" stroke="#ececec" stroke-width="1"/><path d="M724.5 0 v564" stroke="#d6d6d6" stroke-width="1"/><path d="M732.5 0 v564" stroke="#ececec" stroke-width="1"/><path d="M740.5 0 v564" stroke="#d6d6d6" stroke-width="1"/><path d="M748.5 0 v564" stroke="#d6d6d6" stroke-width="1"/></svg>
<div class="r" style="left:111px;top:253px;width:749px;height:16px;background:rgba(145,207,172,0.80);"></div>
<div class="t" style="left:115.4px;top:257.48px;font-size:10.3px;color:#1e1e1e;transform:scaleX(0.9402);transform-origin:0 0;">ReportTitle</div>
<div class="r" style="left:111px;top:269px;width:749px;height:78px;background:rgba(242,249,245,0.45);"></div>
<div class="r" style="left:111px;top:347px;width:749px;height:1px;background:#b7dcc5;"></div>
<div class="t" style="left:113px;top:273.68px;font-size:24px;color:#c59b5f;transform:scaleX(1.0630);transform-origin:0 0;">Selection</div>
<div class="t" style="left:746px;top:273.68px;font-size:24px;color:#c59b5f;transform:scaleX(1.0629);transform-origin:0 0;">Stimulsoft</div>
<div class="r" style="left:111px;top:300px;width:749px;height:1px;background:#d3a25e;"></div>
<div class="t" style="left:113px;top:309.34px;font-size:12px;color:#6d5536;">{ReportDescription}</div>
<div class="t" style="right:642px;top:309.84px;font-size:12px;color:#6d5536;">Date: {Today.ToString("Y")}</div>
<svg class="r" style="left:111px;top:308px;" width="4" height="4" viewBox="0 0 4 4"><path d="M0.5 4 v-3.5 h3.5" stroke="#333" fill="none"/></svg>
<svg class="r" style="left:111px;top:336px;" width="4" height="4" viewBox="0 0 4 4"><path d="M0.5 0 v3.5 h3.5" stroke="#333" fill="none"/></svg>
<svg class="r" style="left:856px;top:308px;" width="4" height="4" viewBox="0 0 4 4"><path d="M0 0.5 h3.5 v3.5" stroke="#333" fill="none"/></svg>
<svg class="r" style="left:856px;top:336px;" width="4" height="4" viewBox="0 0 4 4"><path d="M0 3.5 h3.5 v-3.5" stroke="#333" fill="none"/></svg>
<svg class="r" style="left:856px;top:269px;" width="4" height="4" viewBox="0 0 4 4"><path d="M0 0.5 h3.5 v3.5" stroke="#333" fill="none"/></svg>
<svg class="r" style="left:856px;top:296px;" width="4" height="4" viewBox="0 0 4 4"><path d="M0 3.5 h3.5 v-3.5" stroke="#333" fill="none"/></svg>
<svg class="r" style="left:683px;top:307px;" width="7" height="4" viewBox="0 0 7 4"><path d="M0 0.5 h7 M3.5 0.5 v3" stroke="#333"/></svg>
<svg class="r" style="left:683px;top:335px;" width="7" height="4" viewBox="0 0 7 4"><path d="M0 3.5 h7 M3.5 3.5 v-3" stroke="#333"/></svg>
<svg class="r" style="left:107.0px;top:264.5px;" width="9" height="9" viewBox="0 0 9 9"><circle cx="4.5" cy="4.5" r="3.5" fill="#fff" stroke="#666" stroke-width="1"/></svg>
<svg class="r" style="left:107.0px;top:280.5px;" width="9" height="9" viewBox="0 0 9 9"><circle cx="4.5" cy="4.5" r="3.5" fill="#fff" stroke="#666" stroke-width="1"/></svg>
<svg class="r" style="left:107.0px;top:296.0px;" width="9" height="9" viewBox="0 0 9 9"><circle cx="4.5" cy="4.5" r="3.5" fill="#fff" stroke="#666" stroke-width="1"/></svg>
<svg class="r" style="left:477.0px;top:264.5px;" width="9" height="9" viewBox="0 0 9 9"><circle cx="4.5" cy="4.5" r="3.5" fill="#fff" stroke="#666" stroke-width="1"/></svg>
<svg class="r" style="left:477.0px;top:280.5px;" width="9" height="9" viewBox="0 0 9 9"><circle cx="4.5" cy="4.5" r="3.5" fill="#fff" stroke="#666" stroke-width="1"/></svg>
<svg class="r" style="left:477.0px;top:296.0px;" width="9" height="9" viewBox="0 0 9 9"><circle cx="4.5" cy="4.5" r="3.5" fill="#fff" stroke="#666" stroke-width="1"/></svg>
<div class="r" style="left:111px;top:363px;width:749px;height:16px;background:rgba(168,189,219,0.82);"></div>
<div class="t" style="left:115.4px;top:367.48px;font-size:10.3px;color:#1e1e1e;transform:scaleX(0.9439);transform-origin:0 0;">HeaderBand3</div>
<div class="r" style="left:111px;top:379px;width:749px;height:32px;background:rgba(243,246,252,0.6);"></div>
<svg class="r" style="left:111px;top:387px;" width="4" height="4" viewBox="0 0 4 4"><path d="M0.5 4 v-3.5 h3.5" stroke="#333" fill="none"/></svg>
<svg class="r" style="left:111px;top:408px;" width="4" height="4" viewBox="0 0 4 4"><path d="M0.5 0 v3.5 h3.5" stroke="#333" fill="none"/></svg>
<svg class="r" style="left:856px;top:387px;" width="4" height="4" viewBox="0 0 4 4"><path d="M0 0.5 h3.5 v3.5" stroke="#333" fill="none"/></svg>
<svg class="r" style="left:856px;top:408px;" width="4" height="4" viewBox="0 0 4 4"><path d="M0 3.5 h3.5 v-3.5" stroke="#333" fill="none"/></svg>
<div class="t" style="left:365px;top:393.50px;font-size:12.4px;color:#6d5536;">Please select one <b style="color:#5b4a2e">Category</b> from list below</div>
<div class="r" style="left:111px;top:426px;width:749px;height:16px;background:rgba(168,189,219,0.82);"></div>
<div class="t" style="left:115.4px;top:430.48px;font-size:10.3px;color:#1e1e1e;transform:scaleX(0.9439);transform-origin:0 0;">HeaderBand1</div>
<div class="r" style="left:111px;top:442px;width:749px;height:24px;background:#f3eadf;border:1px solid #d3a25e;"></div>
<div class="t" style="left:285px;width:400px;text-align:center;top:447.84px;font-size:12px;color:#c59b5f;font-weight:bold;">Category</div>
<div class="r" style="left:111px;top:481px;width:749px;height:16px;background:rgba(88,146,206,0.88);"></div>
<div class="t" style="left:115.4px;top:485.48px;font-size:10.3px;color:#1e1e1e;transform:scaleX(0.9292);transform-origin:0 0;">DataBand1; Data Source: Categories</div>
<div class="r" style="left:111px;top:481px;width:749px;height:1px;background:repeating-linear-gradient(90deg,#fff 0 2px,transparent 2px 4px);opacity:0.5;"></div>
<div class="r" style="left:111px;top:497px;width:749px;height:24px;background:rgba(240,246,253,0.6);"></div>
<div class="r" style="left:111px;top:521px;width:749px;height:1px;background:repeating-linear-gradient(90deg,#6f9fd6 0 3px,transparent 3px 4px);"></div>
<div class="r" style="left:111px;top:497px;width:1px;height:24px;background:#d3a25e;"></div>
<div class="r" style="left:859px;top:497px;width:1px;height:24px;background:#d3a25e;"></div>
<div class="t" style="left:113px;top:502.64px;font-size:12px;color:#6d5536;">Line</div>
<div class="t" style="left:137px;top:502.64px;font-size:12px;color:#6d5536;">{Categories.CategoryName}</div>
<svg class="r" style="left:131px;top:497px;" width="7" height="25" viewBox="0 0 7 25"><path d="M0 0.5 h7 M3.5 0.5 v23 M0 23.5 h7" stroke="#888" stroke-width="1"/></svg>
<div class="r" style="left:111px;top:536px;width:749px;height:16px;background:rgba(168,189,219,0.82);"></div>
<div class="t" style="left:115.4px;top:540.48px;font-size:10.3px;color:#1e1e1e;transform:scaleX(0.9404);transform-origin:0 0;">FooterBand1</div>
<div class="r" style="left:111px;top:552px;width:749px;height:8px;background:rgba(243,246,252,0.6);"></div>
<div class="r" style="left:111px;top:552px;width:749px;height:1px;background:#d3a25e;"></div>
<div class="r" style="left:111px;top:560px;width:749px;height:1px;background:repeating-linear-gradient(90deg,#a9c4e4 0 3px,transparent 3px 5px);"></div>
<svg class="r" style="left:111px;top:553px;" width="4" height="4" viewBox="0 0 4 4"><path d="M0.5 4 v-3.5 h3.5" stroke="#333" fill="none"/></svg>
<svg class="r" style="left:111px;top:557px;" width="4" height="4" viewBox="0 0 4 4"><path d="M0.5 0 v3.5 h3.5" stroke="#333" fill="none"/></svg>
<svg class="r" style="left:856px;top:553px;" width="4" height="4" viewBox="0 0 4 4"><path d="M0 0.5 h3.5 v3.5" stroke="#333" fill="none"/></svg>
<svg class="r" style="left:856px;top:557px;" width="4" height="4" viewBox="0 0 4 4"><path d="M0 3.5 h3.5 v-3.5" stroke="#333" fill="none"/></svg>
<div class="r" style="left:111px;top:576px;width:749px;height:16px;background:rgba(168,189,219,0.82);"></div>
<div class="t" style="left:115.4px;top:580.48px;font-size:10.3px;color:#1e1e1e;transform:scaleX(0.9439);transform-origin:0 0;">HeaderBand2</div>
<div class="r" style="left:111px;top:592px;width:749px;height:7px;background:rgba(243,246,252,0.6);"></div>
<div class="r" style="left:111px;top:599px;width:749px;height:25px;background:#f3eadf;border:1px solid #d3a25e;"></div>
<div class="t" style="left:285px;width:400px;text-align:center;top:605.84px;font-size:12px;color:#c59b5f;font-weight:bold;">Products</div>
<div class="r" style="left:111px;top:639px;width:749px;height:16px;background:rgba(168,189,219,0.82);"></div>
<div class="t" style="left:115.4px;top:643.48px;font-size:10.3px;color:#1e1e1e;transform:scaleX(0.9540);transform-origin:0 0;">HeaderProducts</div>
<div class="r" style="left:111px;top:654px;width:749px;height:25px;background:#f3eadf;border:1px solid #d3a25e;"></div>
<div class="r" style="left:379px;top:654px;width:1px;height:25px;background:#d3a25e;"></div>
<div class="r" style="left:615px;top:654px;width:1px;height:25px;background:#d3a25e;"></div>
<div class="r" style="left:741px;top:654px;width:1px;height:25px;background:#d3a25e;"></div>
<div class="t" style="left:45px;width:400px;text-align:center;top:660.84px;font-size:12px;color:#c59b5f;font-weight:bold;">Product Name</div>
<div class="t" style="left:297px;width:400px;text-align:center;top:660.84px;font-size:12px;color:#c59b5f;font-weight:bold;">Company Name</div>
<div class="t" style="left:478px;width:400px;text-align:center;top:660.84px;font-size:12px;color:#c59b5f;font-weight:bold;">Unit Price</div>
<div class="t" style="left:600px;width:400px;text-align:center;top:660.84px;font-size:12px;color:#c59b5f;font-weight:bold;">Units in Stock</div>
<div class="r" style="left:111px;top:694px;width:749px;height:16px;background:rgba(88,146,206,0.88);"></div>
<div class="t" style="left:115.4px;top:698.48px;font-size:10.3px;color:#1e1e1e;transform:scaleX(0.9375);transform-origin:0 0;">DataProducts; Data Source: Products</div>
<div class="r" style="left:111px;top:710px;width:749px;height:23px;background:rgba(240,246,253,0.6);"></div>
<div class="r" style="left:111px;top:733px;width:749px;height:1px;background:repeating-linear-gradient(90deg,#a9c4e4 0 3px,transparent 3px 5px);"></div>
<div class="r" style="left:111px;top:710px;width:1px;height:23px;background:#d3a25e;"></div>
<div class="r" style="left:379px;top:710px;width:1px;height:23px;background:#d3a25e;"></div>
<svg class="r" style="left:376px;top:710px;" width="7" height="24" viewBox="0 0 7 24"><path d="M0 0.5 h7 M0 23.5 h7" stroke="#7a6a50" stroke-width="1"/></svg>
<div class="r" style="left:615px;top:710px;width:1px;height:23px;background:#d3a25e;"></div>
<svg class="r" style="left:612px;top:710px;" width="7" height="24" viewBox="0 0 7 24"><path d="M0 0.5 h7 M0 23.5 h7" stroke="#7a6a50" stroke-width="1"/></svg>
<div class="r" style="left:741px;top:710px;width:1px;height:23px;background:#d3a25e;"></div>
<svg class="r" style="left:738px;top:710px;" width="7" height="24" viewBox="0 0 7 24"><path d="M0 0.5 h7 M0 23.5 h7" stroke="#7a6a50" stroke-width="1"/></svg>
<div class="r" style="left:859px;top:710px;width:1px;height:23px;background:#d3a25e;"></div>
<div class="t" style="left:113px;top:715.54px;font-size:12px;color:#6d5536;">{Products.ProductName}</div>
<div class="t" style="left:381px;top:715.54px;font-size:12px;color:#6d5536;">{Products.Suppliers.CompanyName}</div>
<div class="t" style="right:761px;top:715.54px;font-size:12px;color:#6d5536;">{Products.UnitPrice}</div>
<div class="t" style="right:642px;top:708.84px;font-size:12px;color:#6d5536;">{Products.UnitsInSto</div>
<div class="t" style="right:642px;top:721.84px;font-size:12px;color:#6d5536;">ck}</div>
<div class="r" style="left:111px;top:749px;width:749px;height:16px;background:rgba(168,189,219,0.82);"></div>
<div class="t" style="left:115.4px;top:753.48px;font-size:10.3px;color:#1e1e1e;transform:scaleX(0.9404);transform-origin:0 0;">FooterBand2</div>
<div class="r" style="left:111px;top:765px;width:749px;height:8px;background:rgba(243,246,252,0.6);"></div>
<div class="r" style="left:111px;top:765px;width:749px;height:1px;background:#d3a25e;"></div>
<div class="r" style="left:1126px;top:205px;width:15px;height:14px;background:#fff;border:1px solid #ababab;"></div>
<svg class="r" style="left:1129px;top:209px;" width="9" height="5" viewBox="0 0 9 5"><path d="M0 5 l4.5 -4.5 l4.5 4.5z" fill="#666"/></svg>
<div class="r" style="left:1126px;top:220px;width:15px;height:300px;background:#fff;border:1px solid #ababab;"></div>
<div class="r" style="left:1126px;top:802px;width:15px;height:14px;background:#fff;border:1px solid #ababab;"></div>
<svg class="r" style="left:1129px;top:807px;" width="9" height="5" viewBox="0 0 9 5"><path d="M0 0 l4.5 4.5 l4.5 -4.5z" fill="#666"/></svg>
<div class="r" style="left:1152px;top:155px;width:344px;height:642px;background:#fff;border:1px solid #c6c6c6;"></div>
<div class="r" style="left:1159px;top:162px;width:306px;height:22px;background:#fff;border:1px solid #c8c8c8;"></div>
<div class="t" style="left:1162px;top:167.14px;font-size:12px;color:#333;">Text23 : Text</div>
<svg class="r" style="left:1453px;top:172px;" width="7" height="4" viewBox="0 0 7 4"><path d="M0 0 h7 l-3.5 3.5z" fill="#777"/></svg>
<svg class="r" style="left:1471px;top:164px;" width="18" height="17" viewBox="0 0 18 17"><text x="4.5" y="7.8" font-size="9.5" font-weight="bold" fill="#3d75bb" font-family="Liberation Sans" text-anchor="middle">A</text><text x="4.5" y="16" font-size="9.5" font-weight="bold" fill="#8b4db8" font-family="Liberation Sans" text-anchor="middle">Z</text><path d="M13.5 1 v14 M10.5 12 l3 3.5 l3 -3.5" stroke="#444" stroke-width="1.1" fill="none"/></svg>
<div class="r" style="left:1157px;top:186px;width:334px;height:28px;background:#fff;border:1px solid #d2d2d2;"></div>
<div class="r" style="left:1478px;top:187px;width:12px;height:26px;background:#f5f5f5;"></div>
<svg class="r" style="left:1480px;top:203px;" width="7" height="6" viewBox="0 0 7 6"><path d="M0.5 0.5 h6" stroke="#8aa0c0"/><path d="M0.5 2.5 h6 l-3 3z" fill="#8aa0c0"/></svg>
<svg class="r" style="left:1163px;top:191px;" width="3" height="20" viewBox="0 0 3 20"><rect x="0" y="0" width="2" height="2" fill="#c4c4c4"/><rect x="0" y="4" width="2" height="2" fill="#c4c4c4"/><rect x="0" y="8" width="2" height="2" fill="#c4c4c4"/><rect x="0" y="12" width="2" height="2" fill="#c4c4c4"/><rect x="0" y="16" width="2" height="2" fill="#c4c4c4"/></svg>
<div class="r" style="left:1168px;top:188px;width:24px;height:24px;background:#c5d8f1;"></div>
<svg class="r" style="left:1171px;top:192px;" width="18" height="16" viewBox="0 0 18 16"><rect x="0.5" y="0.5" width="6" height="6" fill="#fff" stroke="#3d75bb"/><rect x="0.5" y="9.5" width="6" height="6" fill="#fff" stroke="#3d75bb"/><path d="M2 3.5 h3 M3.5 2 v3 M2 12.5 h3 M3.5 11 v3" stroke="#3d75bb" stroke-width="0.8"/><path d="M8 2 h9 M8 4.5 h9 M8 7 h9 M8 11 h9 M8 13.5 h9" stroke="#a8bcd8" stroke-width="1"/></svg>
<svg class="r" style="left:1195px;top:191px;" width="18" height="18" viewBox="0 0 18 18"><text x="4.5" y="8.2" font-size="9.5" font-weight="bold" fill="#3d75bb" font-family="Liberation Sans" text-anchor="middle">A</text><text x="4.5" y="16.5" font-size="9.5" font-weight="bold" fill="#8b4db8" font-family="Liberation Sans" text-anchor="middle">Z</text><path d="M12.5 1.5 v14 M9.5 12.5 l3 3.5 l3 -3.5" stroke="#444" stroke-width="1.1" fill="none"/></svg>
<div class="r" style="left:1218px;top:190px;width:1px;height:20px;background:#d0d0d0;"></div>
<div class="r" style="left:1222px;top:188px;width:24px;height:24px;background:#c5d8f1;"></div>
<svg class="r" style="left:1228px;top:194px;" width="13" height="11" viewBox="0 0 13 11"><rect x="0.5" y="0.5" width="12" height="10" fill="#fff" stroke="#666"/><path d="M2.5 3 h1 M5 3 h6 M2.5 5.5 h1 M5 5.5 h6 M2.5 8 h1 M5 8 h6" stroke="#3d75bb" stroke-width="0.9"/></svg>
<svg class="r" style="left:1251px;top:192px;" width="11" height="16" viewBox="0 0 11 16"><path d="M5 0 L1 8 h4 l-2 7 l7 -9 h-4 l3 -6z" fill="#f0c050"/></svg>
<div class="r" style="left:1270px;top:190px;width:1px;height:20px;background:#d0d0d0;"></div>
<div class="r" style="left:1276px;top:188px;width:120px;height:24px;background:#c5d8f1;"></div>
<div class="t" style="left:1277.5px;top:195.31px;font-size:11.8px;color:#444;letter-spacing:0px;">Localize Property Grid</div>
<div class="r" style="left:1157px;top:219px;width:317px;height:577px;background:#fff;border-left:1px solid #c8c8c8;border-top:1px solid #c8c8c8;"></div>
<div class="r" style="left:1475px;top:220px;width:15px;height:14px;background:#fff;border:1px solid #ababab;"></div>
<svg class="r" style="left:1478px;top:224px;" width="9" height="5" viewBox="0 0 9 5"><path d="M0 5 l4.5 -4.5 l4.5 4.5z" fill="#666"/></svg>
<div class="r" style="left:1475px;top:235px;width:15px;height:510px;background:#fff;border:1px solid #ababab;"></div>
<div class="r" style="left:1475px;top:777px;width:15px;height:14px;background:#fff;border:1px solid #ababab;"></div>
<svg class="r" style="left:1478px;top:781px;" width="9" height="5" viewBox="0 0 9 5"><path d="M0 0 l4.5 4.5 l4.5 -4.5z" fill="#666"/></svg>
<div class="r" style="left:1158px;top:220px;width:315px;height:16px;background:#d5e0f1;"></div>
<svg class="r" style="left:1161px;top:225.5px;" width="8" height="5" viewBox="0 0 8 5"><path d="M0 0 h8 l-4 4.5z" fill="#777"/></svg>
<div class="t" style="left:1172px;top:223.29px;font-size:11px;color:#3a3a3a;font-weight:bold;">1. Text</div>
<div class="r" style="left:1172px;top:253px;width:301px;height:1px;background:#dadada;"></div>
<div class="r" style="left:1271px;top:236px;width:1px;height:17px;background:#dadada;"></div>
<div class="t" style="left:1175px;top:240.19px;font-size:11px;color:#222;">Text</div>
<div class="t" style="left:1275px;top:240.19px;font-size:11px;color:#333;"><span style="color:#666">Selection</span></div>
<div class="r" style="left:1454px;top:240px;width:17px;height:12px;background:#fff;border:1px solid #c8c8c8;border-radius:2px;"></div>
<div class="t" style="left:1457px;top:241.38px;font-size:9px;color:#555;">...</div>
<div class="r" style="left:1173px;top:254px;width:299px;height:20px;background:#d5e0f1;border:1px solid #c8c8c8;"></div>
<svg class="r" style="left:1178px;top:260.0px;" width="5" height="8" viewBox="0 0 5 8"><path d="M0 0 v8 l4.5 -4z" fill="#777"/></svg>
<div class="t" style="left:1187px;top:258.99px;font-size:11px;color:#222;font-weight:bold;">Text Brush</div>
<div class="t" style="left:1373px;top:258.89px;font-size:11px;color:#222;">Solid</div>
<svg class="r" style="left:1455px;top:262px;" width="8" height="5" viewBox="0 0 8 5"><path d="M0 0 h8 l-4 4z" fill="#222"/></svg>
<div class="r" style="left:1172px;top:291px;width:301px;height:1px;background:#dadada;"></div>
<div class="r" style="left:1271px;top:274px;width:1px;height:17px;background:#dadada;"></div>
<div class="t" style="left:1175px;top:278.19px;font-size:11px;color:#222;">Font</div>
<div class="t" style="left:1275px;top:278.19px;font-size:11px;color:#333;">Arial,19</div>
<svg class="r" style="left:1458px;top:280.5px;" width="8" height="5" viewBox="0 0 8 5"><path d="M0 0 h8 l-4 4z" fill="#222"/></svg>
<div class="r" style="left:1172px;top:308px;width:301px;height:1px;background:#dadada;"></div>
<div class="r" style="left:1271px;top:291px;width:1px;height:17px;background:#dadada;"></div>
<div class="t" style="left:1175px;top:295.19px;font-size:11px;color:#222;">Horizontal Align...</div>
<div class="r" style="left:1273px;top:292px;width:20px;height:16px;background:#c5d8f1;border:1px solid #4a7cc0;"></div>
<svg class="r" style="left:1276px;top:292px;" width="14" height="15" viewBox="0 0 14 15"><path d="M0 2.5 h14 M0 5.5 h10 M0 8.5 h14 M0 11.5 h10" stroke="#111" stroke-width="1.3"/></svg>
<svg class="r" style="left:1296px;top:292px;" width="14" height="15" viewBox="0 0 14 15"><path d="M0 2.5 h14 M2 5.5 h10 M0 8.5 h14 M2 11.5 h10" stroke="#111" stroke-width="1.3"/></svg>
<svg class="r" style="left:1316px;top:292px;" width="14" height="15" viewBox="0 0 14 15"><path d="M0 2.5 h14 M4 5.5 h10 M0 8.5 h14 M4 11.5 h10" stroke="#111" stroke-width="1.3"/></svg>
<svg class="r" style="left:1336px;top:292px;" width="14" height="15" viewBox="0 0 14 15"><path d="M0 2.5 h14 M0 5.5 h14 M0 8.5 h14 M0 11.5 h14" stroke="#111" stroke-width="1.3"/></svg>
<div class="r" style="left:1172px;top:325px;width:301px;height:1px;background:#dadada;"></div>
<div class="r" style="left:1271px;top:308px;width:1px;height:17px;background:#dadada;"></div>
<div class="t" style="left:1175px;top:312.19px;font-size:11px;color:#222;">Vertical Alignment</div>
<div class="r" style="left:1293px;top:309px;width:20px;height:16px;background:#c5d8f1;border:1px solid #4a7cc0;"></div>
<svg class="r" style="left:1276px;top:311px;" width="14" height="12" viewBox="0 0 14 12"><path d="M0.5 0 v11 M3.5 0 v8 M6.5 0 v11 M9.5 0 v8 M12.5 0 v11" stroke="#111" stroke-width="1.1"/></svg>
<svg class="r" style="left:1297px;top:311px;" width="14" height="12" viewBox="0 0 14 12"><path d="M0.5 0 v11 M3.5 2 v7 M6.5 0 v11 M9.5 2 v7 M12.5 0 v11" stroke="#111" stroke-width="1.1"/></svg>
<svg class="r" style="left:1316px;top:311px;" width="14" height="12" viewBox="0 0 14 12"><path d="M0.5 0 v11 M3.5 3 v8 M6.5 0 v11 M9.5 3 v8 M12.5 0 v11" stroke="#111" stroke-width="1.1"/></svg>
<div class="r" style="left:1172px;top:342px;width:301px;height:1px;background:#dadada;"></div>
<div class="r" style="left:1271px;top:325px;width:1px;height:17px;background:#dadada;"></div>
<div class="t" style="left:1175px;top:329.19px;font-size:11px;color:#222;">Text Format</div>
<div class="r" style="left:1273px;top:326px;width:20px;height:16px;background:#c5d8f1;border:1px solid #4a7cc0;"></div>
<div class="t" style="left:1277px;top:330.46px;font-size:9.5px;color:#111;font-weight:bold;transform:scaleX(0.5344);transform-origin:0 0;">ABC</div>
<div class="t" style="left:1297px;top:330.46px;font-size:9.5px;color:#111;font-weight:bold;transform:scaleX(0.6941);transform-origin:0 0;">123</div>
<div class="t" style="left:1316px;top:330.46px;font-size:9.5px;color:#111;font-weight:bold;transform:scaleX(0.6625);transform-origin:0 0;">123$</div>
<div class="t" style="left:1339px;top:326.85px;font-size:7.5px;color:#111;font-weight:bold;transform:scaleX(0.8390);transform-origin:0 0;">01</div>
<div class="t" style="left:1336px;top:335.15px;font-size:7.5px;color:#111;font-weight:bold;transform:scaleX(0.8665);transform-origin:0 0;">JAN</div>
<div class="t" style="left:1355px;top:330.46px;font-size:9.5px;color:#111;font-weight:bold;transform:scaleX(0.6586);transform-origin:0 0;">12:00</div>
<div class="t" style="left:1378px;top:330.04px;font-size:10px;color:#111;font-weight:bold;transform:scaleX(1.0121);transform-origin:0 0;">%</div>
<div class="t" style="left:1398px;top:326.57px;font-size:7px;color:#111;font-weight:bold;transform:scaleX(0.9524);transform-origin:0 0;">ON</div>
<div class="r" style="left:1397px;top:334px;width:12px;height:1px;background:#111;"></div>
<div class="t" style="left:1397px;top:334.57px;font-size:7px;color:#111;font-weight:bold;transform:scaleX(0.8572);transform-origin:0 0;">OFF</div>
<div class="t" style="left:1415px;top:330.04px;font-size:10px;color:#111;font-weight:bold;transform:scaleX(1.0072);transform-origin:0 0;">#,#</div>
<div class="r" style="left:1435px;top:328px;width:16px;height:12px;background:#fff;border:1px solid #c8c8c8;border-radius:2px;"></div>
<div class="t" style="left:1438px;top:329.38px;font-size:9px;color:#555;">...</div>
<div class="r" style="left:1158px;top:342px;width:315px;height:3px;background:#e9e9e9;"></div>
<div class="r" style="left:1158px;top:342px;width:315px;height:1px;background:#d6d6d6;"></div>
<div class="r" style="left:1158px;top:345px;width:315px;height:17px;background:#d5e0f1;"></div>
<svg class="r" style="left:1161px;top:351.0px;" width="8" height="5" viewBox="0 0 8 5"><path d="M0 0 h8 l-4 4.5z" fill="#777"/></svg>
<div class="t" style="left:1172px;top:348.79px;font-size:11px;color:#3a3a3a;font-weight:bold;">2. Text&nbsp; Additional</div>
<div class="r" style="left:1172px;top:379px;width:301px;height:1px;background:#dadada;"></div>
<div class="r" style="left:1271px;top:362px;width:1px;height:17px;background:#dadada;"></div>
<div class="t" style="left:1175px;top:366.19px;font-size:11px;color:#222;">Allow HTML Tags</div>
<div class="r" style="left:1274px;top:364px;width:12px;height:12px;background:#fff;border:1px solid #a5a5a5;"></div>
<div class="r" style="left:1172px;top:396px;width:301px;height:1px;background:#dadada;"></div>
<div class="r" style="left:1271px;top:379px;width:1px;height:17px;background:#dadada;"></div>
<div class="t" style="left:1175px;top:383.19px;font-size:11px;color:#222;">Angle</div>
<div class="t" style="left:1275px;top:383.19px;font-size:11px;color:#333;">0</div>
<div class="r" style="left:1172px;top:413px;width:301px;height:1px;background:#dadada;"></div>
<div class="r" style="left:1271px;top:396px;width:1px;height:17px;background:#dadada;"></div>
<div class="t" style="left:1175px;top:400.19px;font-size:11px;color:#222;">Editable</div>
<div class="r" style="left:1274px;top:398px;width:12px;height:12px;background:#fff;border:1px solid #a5a5a5;"></div>
<div class="r" style="left:1172px;top:430px;width:301px;height:1px;background:#dadada;"></div>
<div class="r" style="left:1271px;top:413px;width:1px;height:17px;background:#dadada;"></div>
<div class="t" style="left:1175px;top:417.19px;font-size:11px;color:#222;">Hide Zeros</div>
<div class="r" style="left:1274px;top:416px;width:12px;height:12px;background:#fff;border:1px solid #a5a5a5;"></div>
<div class="r" style="left:1172px;top:447px;width:301px;height:1px;background:#dadada;"></div>
<div class="r" style="left:1271px;top:430px;width:1px;height:17px;background:#dadada;"></div>
<div class="t" style="left:1175px;top:434.19px;font-size:11px;color:#222;">Lines of Underline</div>
<svg class="r" style="left:1275px;top:436px;" width="140" height="6" viewBox="0 0 140 6"><path d="M0 2.5 h16" stroke="#111" stroke-width="2"/><path d="M21 2.5 h15" stroke="#111" stroke-width="2" stroke-dasharray="6 3"/><path d="M41 2.5 h14" stroke="#111" stroke-width="2" stroke-dasharray="2 2 6 2 2 100"/><path d="M61 2.5 h14" stroke="#111" stroke-width="2" stroke-dasharray="6 2 2 2 2 100"/><path d="M81 2.5 h14" stroke="#111" stroke-width="2" stroke-dasharray="2 2"/><path d="M100 1.5 h16 M100 4.5 h16" stroke="#111" stroke-width="1"/></svg>
<div class="r" style="left:1393px;top:431px;width:21px;height:16px;background:#c5d8f1;border:1px solid #4a7cc0;"></div>
<div class="r" style="left:1172px;top:464px;width:301px;height:1px;background:#dadada;"></div>
<div class="r" style="left:1271px;top:447px;width:1px;height:17px;background:#dadada;"></div>
<div class="t" style="left:1175px;top:451.19px;font-size:11px;color:#222;">Margins</div>
<div class="t" style="left:1276px;top:450.19px;font-size:11px;color:#555;">0</div>
<svg class="r" style="left:1300px;top:451px;" width="9" height="9" viewBox="0 0 9 9"><path d="M0 4.5 l4 -4 v2.5 h5 v3 h-5 v2.5z" fill="#222"/></svg>
<div class="t" style="left:1317px;top:450.19px;font-size:11px;color:#555;">0</div>
<svg class="r" style="left:1341px;top:451px;" width="9" height="9" viewBox="0 0 9 9"><path d="M9 4.5 l-4 -4 v2.5 h-5 v3 h5 v2.5z" fill="#222"/></svg>
<div class="t" style="left:1358px;top:450.19px;font-size:11px;color:#555;">0</div>
<svg class="r" style="left:1382px;top:451px;" width="9" height="10" viewBox="0 0 9 10"><path d="M4.5 0 l4 4 h-2.5 v5 h-3 v-5 h-2.5z" fill="#222"/></svg>
<div class="t" style="left:1398px;top:450.19px;font-size:11px;color:#555;">0</div>
<svg class="r" style="left:1422px;top:451px;" width="9" height="10" viewBox="0 0 9 10"><path d="M4.5 9 l4 -4 h-2.5 v-5 h-3 v5 h-2.5z" fill="#222"/></svg>
<div class="r" style="left:1312px;top:447px;width:1px;height:17px;background:#dadada;"></div>
<div class="r" style="left:1353px;top:447px;width:1px;height:17px;background:#dadada;"></div>
<div class="r" style="left:1394px;top:447px;width:1px;height:17px;background:#dadada;"></div>
<div class="r" style="left:1172px;top:481px;width:301px;height:1px;background:#dadada;"></div>
<div class="r" style="left:1271px;top:464px;width:1px;height:17px;background:#dadada;"></div>
<div class="t" style="left:1175px;top:468.19px;font-size:11px;color:#222;">Max Number of L...</div>
<div class="t" style="left:1275px;top:468.19px;font-size:11px;color:#333;">0</div>
<div class="r" style="left:1172px;top:498px;width:301px;height:1px;background:#dadada;"></div>
<div class="r" style="left:1271px;top:481px;width:1px;height:17px;background:#dadada;"></div>
<div class="t" style="left:1175px;top:485.19px;font-size:11px;color:#222;">Only Text</div>
<div class="r" style="left:1274px;top:484px;width:12px;height:12px;background:#fff;border:1px solid #a5a5a5;"></div>
<div class="r" style="left:1172px;top:515px;width:301px;height:1px;background:#dadada;"></div>
<div class="r" style="left:1271px;top:498px;width:1px;height:17px;background:#dadada;"></div>
<div class="t" style="left:1175px;top:502.19px;font-size:11px;color:#222;">Process at</div>
<div class="t" style="left:1275px;top:502.19px;font-size:11px;color:#333;">None</div>
<svg class="r" style="left:1459px;top:504.5px;" width="8" height="5" viewBox="0 0 8 5"><path d="M0 0 h8 l-4 4z" fill="#222"/></svg>
<div class="r" style="left:1172px;top:532px;width:301px;height:1px;background:#dadada;"></div>
<div class="r" style="left:1271px;top:515px;width:1px;height:17px;background:#dadada;"></div>
<div class="t" style="left:1175px;top:519.19px;font-size:11px;color:#222;">Processing Dupli...</div>
<div class="t" style="left:1275px;top:519.19px;font-size:11px;color:#333;">None</div>
<svg class="r" style="left:1459px;top:521.5px;" width="8" height="5" viewBox="0 0 8 5"><path d="M0 0 h8 l-4 4z" fill="#222"/></svg>
<div class="r" style="left:1172px;top:549px;width:301px;height:1px;background:#dadada;"></div>
<div class="r" style="left:1271px;top:532px;width:1px;height:17px;background:#dadada;"></div>
<div class="t" style="left:1175px;top:536.19px;font-size:11px;color:#222;">Render to</div>
<svg class="r" style="left:1459px;top:538.5px;" width="8" height="5" viewBox="0 0 8 5"><path d="M0 0 h8 l-4 4z" fill="#222"/></svg>
<div class="r" style="left:1172px;top:567px;width:301px;height:1px;background:#dadada;"></div>
<div class="r" style="left:1271px;top:549px;width:1px;height:18px;background:#dadada;"></div>
<div class="t" style="left:1175px;top:553.69px;font-size:11px;color:#222;">Shrink Font to Fit</div>
<div class="r" style="left:1274px;top:552px;width:12px;height:12px;background:#fff;border:1px solid #a5a5a5;"></div>
<div class="r" style="left:1172px;top:584px;width:301px;height:1px;background:#dadada;"></div>
<div class="r" style="left:1271px;top:567px;width:1px;height:17px;background:#dadada;"></div>
<div class="t" style="left:1175px;top:571.19px;font-size:11px;color:#222;">Shrink Font to Fit...</div>
<div class="t" style="left:1275px;top:571.19px;font-size:11px;color:#333;">1</div>
<div class="r" style="left:1173px;top:586px;width:299px;height:18px;background:#d5e0f1;border:1px solid #c8c8c8;"></div>
<svg class="r" style="left:1178px;top:591.0px;" width="5" height="8" viewBox="0 0 5 8"><path d="M0 0 v8 l4.5 -4z" fill="#777"/></svg>
<div class="t" style="left:1187px;top:589.99px;font-size:11px;color:#222;font-weight:bold;">Text Options</div>
<div class="r" style="left:1172px;top:621px;width:301px;height:1px;background:#dadada;"></div>
<div class="r" style="left:1271px;top:603px;width:1px;height:18px;background:#dadada;"></div>
<div class="t" style="left:1175px;top:607.69px;font-size:11px;color:#222;">Word Wrap</div>
<div class="r" style="left:1274px;top:606px;width:12px;height:12px;background:#fff;border:1px solid #a5a5a5;"></div>
<div class="r" style="left:1158px;top:621px;width:315px;height:3px;background:#e9e9e9;"></div>
<div class="r" style="left:1158px;top:621px;width:315px;height:1px;background:#d6d6d6;"></div>
<div class="r" style="left:1158px;top:624px;width:315px;height:18px;background:#d5e0f1;"></div>
<svg class="r" style="left:1161px;top:630.5px;" width="8" height="5" viewBox="0 0 8 5"><path d="M0 0 h8 l-4 4.5z" fill="#777"/></svg>
<div class="t" style="left:1172px;top:628.29px;font-size:11px;color:#3a3a3a;font-weight:bold;">3. Position</div>
<div class="r" style="left:1172px;top:659px;width:301px;height:1px;background:#dadada;"></div>
<div class="r" style="left:1271px;top:642px;width:1px;height:17px;background:#dadada;"></div>
<div class="t" style="left:1175px;top:646.19px;font-size:11px;color:#222;">Left</div>
<div class="t" style="left:1275px;top:646.19px;font-size:11px;color:#333;">0</div>
<div class="r" style="left:1172px;top:676px;width:301px;height:1px;background:#dadada;"></div>
<div class="r" style="left:1271px;top:659px;width:1px;height:17px;background:#dadada;"></div>
<div class="t" style="left:1175px;top:663.19px;font-size:11px;color:#222;">Top</div>
<div class="t" style="left:1275px;top:663.19px;font-size:11px;color:#333;">0</div>
<div class="r" style="left:1172px;top:693px;width:301px;height:1px;background:#dadada;"></div>
<div class="r" style="left:1271px;top:676px;width:1px;height:17px;background:#dadada;"></div>
<div class="t" style="left:1175px;top:680.19px;font-size:11px;color:#222;">Width</div>
<div class="t" style="left:1275px;top:680.19px;font-size:11px;color:#333;">9.4</div>
<div class="r" style="left:1172px;top:709px;width:301px;height:1px;background:#dadada;"></div>
<div class="r" style="left:1271px;top:693px;width:1px;height:16px;background:#dadada;"></div>
<div class="t" style="left:1175px;top:696.69px;font-size:11px;color:#222;">Height</div>
<div class="t" style="left:1275px;top:696.69px;font-size:11px;color:#333;">0.8</div>
<div class="r" style="left:1172px;top:726px;width:301px;height:1px;background:#dadada;"></div>
<div class="r" style="left:1271px;top:709px;width:1px;height:17px;background:#dadada;"></div>
<div class="t" style="left:1175px;top:713.19px;font-size:11px;color:#222;">Min Size</div>
<div class="t" style="left:1276px;top:712.39px;font-size:11px;color:#555;">0</div>
<svg class="r" style="left:1296px;top:713px;" width="11" height="9" viewBox="0 0 11 9"><path d="M0 4.5 l4 -4 v8z M11 4.5 l-4 -4 v8z M3 3.5 h5 v2 h-5z" fill="#222"/></svg>
<div class="r" style="left:1312px;top:709px;width:1px;height:17px;background:#dadada;"></div>
<div class="t" style="left:1317px;top:712.39px;font-size:11px;color:#555;">0</div>
<svg class="r" style="left:1339px;top:712px;" width="9" height="11" viewBox="0 0 9 11"><path d="M4.5 0 l4 4 h-8z M4.5 11 l4 -4 h-8z M3.5 3 h2 v5 h-2z" fill="#222"/></svg>
<div class="r" style="left:1353px;top:709px;width:1px;height:17px;background:#dadada;"></div>
<div class="r" style="left:1172px;top:743px;width:301px;height:1px;background:#dadada;"></div>
<div class="r" style="left:1271px;top:726px;width:1px;height:17px;background:#dadada;"></div>
<div class="t" style="left:1175px;top:730.19px;font-size:11px;color:#222;">Max Size</div>
<div class="t" style="left:1276px;top:729.39px;font-size:11px;color:#555;">0</div>
<svg class="r" style="left:1296px;top:730px;" width="11" height="9" viewBox="0 0 11 9"><path d="M0 4.5 l4 -4 v8z M11 4.5 l-4 -4 v8z M3 3.5 h5 v2 h-5z" fill="#222"/></svg>
<div class="r" style="left:1312px;top:726px;width:1px;height:17px;background:#dadada;"></div>
<div class="t" style="left:1317px;top:729.39px;font-size:11px;color:#555;">0</div>
<svg class="r" style="left:1339px;top:729px;" width="9" height="11" viewBox="0 0 9 11"><path d="M4.5 0 l4 4 h-8z M4.5 11 l4 -4 h-8z M3.5 3 h2 v5 h-2z" fill="#222"/></svg>
<div class="r" style="left:1353px;top:726px;width:1px;height:17px;background:#dadada;"></div>
<div class="r" style="left:1158px;top:743px;width:315px;height:3px;background:#e9e9e9;"></div>
<div class="r" style="left:1158px;top:743px;width:315px;height:1px;background:#d6d6d6;"></div>
<div class="r" style="left:1158px;top:746px;width:315px;height:18px;background:#d5e0f1;"></div>
<svg class="r" style="left:1162px;top:751.0px;" width="5" height="8" viewBox="0 0 5 8"><path d="M0 0 v8 l4.5 -4z" fill="#777"/></svg>
<div class="t" style="left:1172px;top:750.29px;font-size:11px;color:#3a3a3a;font-weight:bold;">4. Appearance</div>
<div class="r" style="left:1158px;top:764px;width:315px;height:3px;background:#e9e9e9;"></div>
<div class="r" style="left:1158px;top:764px;width:315px;height:1px;background:#d6d6d6;"></div>
<div class="r" style="left:1158px;top:767px;width:315px;height:17px;background:#d5e0f1;"></div>
<svg class="r" style="left:1162px;top:771.5px;" width="5" height="8" viewBox="0 0 5 8"><path d="M0 0 v8 l4.5 -4z" fill="#777"/></svg>
<div class="t" style="left:1172px;top:770.79px;font-size:11px;color:#3a3a3a;font-weight:bold;">5. Behavior</div>
<div class="r" style="left:1158px;top:784px;width:315px;height:3px;background:#e9e9e9;"></div>
<div class="r" style="left:1158px;top:784px;width:315px;height:1px;background:#d6d6d6;"></div>
<div class="r" style="left:1158px;top:787px;width:315px;height:4px;background:#d5e0f1;"></div>
<div class="r" style="left:1153px;top:796px;width:342px;height:25px;background:linear-gradient(#f2f2f2,#f1f1f1);"></div>
<div class="r" style="left:1152px;top:795px;width:11px;height:1px;background:#c6c6c6;"></div>
<div class="r" style="left:1477px;top:795px;width:19px;height:1px;background:#c6c6c6;"></div>
<div class="r" style="left:1152px;top:155px;width:1px;height:641px;background:#c6c6c6;"></div>
<div class="r" style="left:1495px;top:155px;width:1px;height:641px;background:#c6c6c6;"></div>
<div class="r" style="left:1162px;top:795px;width:101px;height:22px;background:#fff;border-left:1px solid #c6c6c6;border-right:1px solid #c6c6c6;"></div>
<div class="r" style="left:1162px;top:815px;width:101px;height:2px;background:#2b579a;"></div>
<div class="r" style="left:1266px;top:795px;width:100px;height:22px;background:#fff;border-left:1px solid #c6c6c6;border-right:1px solid #c6c6c6;border-bottom:1px solid #c6c6c6;"></div>
<div class="r" style="left:1370px;top:795px;width:108px;height:22px;background:#fff;border-left:1px solid #c6c6c6;border-right:1px solid #c6c6c6;border-bottom:1px solid #c6c6c6;"></div>
<svg class="r" style="left:1174px;top:800px;" width="18" height="16" viewBox="0 0 18 16"><rect x="1.5" y="5.5" width="12" height="10" fill="#fff" stroke="#777"/><path d="M3.5 9 h8 M3.5 11 h8 M3.5 13 h8" stroke="#7aa2d4" stroke-width="0.9"/><path d="M2 6 q4 -7 12 -5 v4 q-6 -1 -10 2z" fill="#e5b85a"/><path d="M14 1 v4" stroke="#5cb85c" stroke-width="1.5"/></svg>
<div class="t" style="left:1194px;top:800.84px;font-size:12px;color:#222;">Properties</div>
<svg class="r" style="left:1280px;top:800px;" width="14" height="14" viewBox="0 0 14 14"><rect x="6.5" y="0.5" width="7" height="7" fill="#3d75bb"/><rect x="0.5" y="5.5" width="9" height="8" fill="#fff" stroke="#3d75bb"/><rect x="0.5" y="5.5" width="9" height="2.5" fill="#3d75bb"/><path d="M2 10 h1.5 M5 10 h1.5 M2 12 h1.5 M5 12 h1.5" stroke="#3d75bb" stroke-width="0.8"/></svg>
<div class="t" style="left:1299px;top:800.84px;font-size:12px;color:#222;">Dictionary</div>
<svg class="r" style="left:1384px;top:799px;" width="15" height="15" viewBox="0 0 15 15"><rect x="0.5" y="0.5" width="14" height="14" fill="#fff" stroke="#666"/><path d="M2.5 3 h4 M4.5 3 v9 M4.5 6.5 h3 M4.5 9.5 h3 M8 6.5 h4 M8 9.5 h4 M8 12 h4" stroke="#3d75bb" stroke-width="1.1"/></svg>
<div class="t" style="left:1404px;top:801.18px;font-size:11.6px;color:#222;">Report Tree</div>
<div class="r" style="left:0px;top:821px;width:1500px;height:29px;background:#2b579a;"></div>
<div class="t" style="left:10px;top:829.90px;font-size:11.7px;color:#fff;transform:scaleX(0.8825);transform-origin:0 0;">CENTIMETERS</div>
<svg class="r" style="left:88px;top:832px;" width="7" height="4" viewBox="0 0 7 4"><path d="M0 4 l3.5 -3.5 l3.5 3.5z" fill="#fff"/></svg>
<div class="r" style="left:104px;top:823px;width:1px;height:25px;background:#c3d1e6;"></div>
<svg class="r" style="left:113px;top:830px;" width="6" height="11" viewBox="0 0 6 11"><path d="M0 0 l6 5.5 l-6 5.5z" fill="#fff"/></svg>
<div class="t" style="left:123px;top:829.90px;font-size:11.7px;color:#fff;transform:scaleX(0.8732);transform-origin:0 0;">REPORT CHECKER</div>
<div class="r" style="left:225px;top:823px;width:1px;height:25px;background:#c3d1e6;"></div>
<div class="t" style="left:260px;top:829.90px;font-size:11.7px;color:#fff;transform:scaleX(0.8855);transform-origin:0 0;">TEXT23</div>
<div class="r" style="left:331px;top:823px;width:1px;height:25px;background:#c3d1e6;"></div>
<div class="t" style="left:335px;top:829.90px;font-size:11.7px;color:#fff;transform:scaleX(0.9899);transform-origin:0 0;">X:0.00&nbsp; Y:0.00&nbsp; Width:9.40&nbsp; Height:0.80</div>
<div class="t" style="left:1289px;top:829.90px;font-size:11.7px;color:#fff;transform:scaleX(0.9692);transform-origin:0 0;">100%</div>
<div class="r" style="left:1334px;top:835px;width:8px;height:2px;background:#fff;"></div>
<div class="r" style="left:1350px;top:835px;width:121px;height:1px;background:#fff;"></div>
<div class="r" style="left:1409px;top:829px;width:3px;height:12px;background:#fff;"></div>
<div class="r" style="left:1479px;top:835px;width:9px;height:2px;background:#fff;"></div>
<div class="r" style="left:1482.5px;top:831px;width:2px;height:10px;background:#fff;"></div>
<div class="r" style="left:161px;top:151px;width:286px;height:206px;background:#fff;border:1px solid #c6c6c6;box-shadow:1px 1px 2px rgba(0,0,0,0.12);"></div>
<div class="t" style="left:170px;top:159.18px;font-size:11.6px;color:#555;font-weight:bold;">Columns</div>
<svg class="r" style="left:170px;top:176px;filter:drop-shadow(1px 1px 1px rgba(0,0,0,0.15));" width="101" height="141" viewBox="0 0 101 141"><rect x="0.5" y="0.5" width="99" height="139" fill="#fff" stroke="#c8c8c8"/><text x="50" y="11" font-size="8" font-weight="bold" fill="#9a3d14" text-anchor="middle" font-family="Liberation Sans" letter-spacing="0.3">Columns</text><rect x="4" y="12.2" width="44" height="3" fill="#dc8a3a"/><path d="M5 16.70 h20" stroke="#2a2a2a" stroke-width="0.75"/><path d="M32 16.70 h10" stroke="#333" stroke-width="0.75"/><rect x="4" y="18.13" width="44" height="2.83" fill="#fde7cf"/><path d="M5 19.53 h12" stroke="#2a2a2a" stroke-width="0.75"/><path d="M32 19.53 h11" stroke="#333" stroke-width="0.75"/><path d="M5 22.36 h19" stroke="#2a2a2a" stroke-width="0.75"/><path d="M32 22.36 h8" stroke="#333" stroke-width="0.75"/><rect x="4" y="23.79" width="44" height="2.83" fill="#fde7cf"/><path d="M5 25.19 h17" stroke="#2a2a2a" stroke-width="0.75"/><path d="M32 25.19 h8" stroke="#333" stroke-width="0.75"/><path d="M5 28.02 h23" stroke="#2a2a2a" stroke-width="0.75"/><path d="M32 28.02 h11" stroke="#333" stroke-width="0.75"/><rect x="4" y="29.45" width="44" height="2.83" fill="#fde7cf"/><path d="M5 30.85 h19" stroke="#2a2a2a" stroke-width="0.75"/><path d="M32 30.85 h11" stroke="#333" stroke-width="0.75"/><path d="M5 33.68 h15" stroke="#2a2a2a" stroke-width="0.75"/><path d="M32 33.68 h9" stroke="#333" stroke-width="0.75"/><rect x="4" y="35.11" width="44" height="2.83" fill="#fde7cf"/><path d="M5 36.51 h12" stroke="#2a2a2a" stroke-width="0.75"/><path d="M32 36.51 h9" stroke="#333" stroke-width="0.75"/><path d="M5 39.34 h25" stroke="#2a2a2a" stroke-width="0.75"/><path d="M32 39.34 h10" stroke="#333" stroke-width="0.75"/><rect x="4" y="40.77" width="44" height="2.83" fill="#fde7cf"/><path d="M5 42.17 h17" stroke="#2a2a2a" stroke-width="0.75"/><path d="M32 42.17 h11" stroke="#333" stroke-width="0.75"/><path d="M5 45.00 h17" stroke="#2a2a2a" stroke-width="0.75"/><path d="M32 45.00 h8" stroke="#333" stroke-width="0.75"/><rect x="4" y="46.43" width="44" height="2.83" fill="#fde7cf"/><path d="M5 47.83 h16" stroke="#2a2a2a" stroke-width="0.75"/><path d="M32 47.83 h11" stroke="#333" stroke-width="0.75"/><path d="M5 50.66 h16" stroke="#2a2a2a" stroke-width="0.75"/><path d="M32 50.66 h9" stroke="#333" stroke-width="0.75"/><rect x="4" y="52.09" width="44" height="2.83" fill="#fde7cf"/><path d="M5 53.49 h12" stroke="#2a2a2a" stroke-width="0.75"/><path d="M32 53.49 h8" stroke="#333" stroke-width="0.75"/><path d="M5 56.32 h18" stroke="#2a2a2a" stroke-width="0.75"/><path d="M32 56.32 h9" stroke="#333" stroke-width="0.75"/><rect x="4" y="57.75" width="44" height="2.83" fill="#fde7cf"/><path d="M5 59.15 h17" stroke="#2a2a2a" stroke-width="0.75"/><path d="M32 59.15 h9" stroke="#333" stroke-width="0.75"/><path d="M5 61.98 h21" stroke="#2a2a2a" stroke-width="0.75"/><path d="M32 61.98 h10" stroke="#333" stroke-width="0.75"/><rect x="4" y="63.41" width="44" height="2.83" fill="#fde7cf"/><path d="M5 64.81 h18" stroke="#2a2a2a" stroke-width="0.75"/><path d="M32 64.81 h9" stroke="#333" stroke-width="0.75"/><path d="M5 67.64 h17" stroke="#2a2a2a" stroke-width="0.75"/><path d="M32 67.64 h9" stroke="#333" stroke-width="0.75"/><rect x="4" y="69.07" width="44" height="2.83" fill="#fde7cf"/><path d="M5 70.47 h24" stroke="#2a2a2a" stroke-width="0.75"/><path d="M32 70.47 h10" stroke="#333" stroke-width="0.75"/><path d="M5 73.30 h12" stroke="#2a2a2a" stroke-width="0.75"/><path d="M32 73.30 h10" stroke="#333" stroke-width="0.75"/><rect x="4" y="74.73" width="44" height="2.83" fill="#fde7cf"/><path d="M5 76.13 h25" stroke="#2a2a2a" stroke-width="0.75"/><path d="M32 76.13 h9" stroke="#333" stroke-width="0.75"/><path d="M5 78.96 h16" stroke="#2a2a2a" stroke-width="0.75"/><path d="M32 78.96 h10" stroke="#333" stroke-width="0.75"/><rect x="4" y="80.39" width="44" height="2.83" fill="#fde7cf"/><path d="M5 81.79 h14" stroke="#2a2a2a" stroke-width="0.75"/><path d="M32 81.79 h10" stroke="#333" stroke-width="0.75"/><path d="M5 84.62 h21" stroke="#2a2a2a" stroke-width="0.75"/><path d="M32 84.62 h8" stroke="#333" stroke-width="0.75"/><rect x="4" y="86.05" width="44" height="2.83" fill="#fde7cf"/><path d="M5 87.45 h22" stroke="#2a2a2a" stroke-width="0.75"/><path d="M32 87.45 h8" stroke="#333" stroke-width="0.75"/><path d="M5 90.28 h21" stroke="#2a2a2a" stroke-width="0.75"/><path d="M32 90.28 h10" stroke="#333" stroke-width="0.75"/><rect x="4" y="91.71" width="44" height="2.83" fill="#fde7cf"/><path d="M5 93.11 h21" stroke="#2a2a2a" stroke-width="0.75"/><path d="M32 93.11 h11" stroke="#333" stroke-width="0.75"/><path d="M5 95.94 h22" stroke="#2a2a2a" stroke-width="0.75"/><path d="M32 95.94 h9" stroke="#333" stroke-width="0.75"/><rect x="4" y="97.37" width="44" height="2.83" fill="#fde7cf"/><path d="M5 98.77 h27" stroke="#2a2a2a" stroke-width="0.75"/><path d="M32 98.77 h11" stroke="#333" stroke-width="0.75"/><path d="M5 101.60 h17" stroke="#2a2a2a" stroke-width="0.75"/><path d="M32 101.60 h8" stroke="#333" stroke-width="0.75"/><rect x="4" y="103.03" width="44" height="2.83" fill="#fde7cf"/><path d="M5 104.43 h20" stroke="#2a2a2a" stroke-width="0.75"/><path d="M32 104.43 h8" stroke="#333" stroke-width="0.75"/><path d="M5 107.26 h23" stroke="#2a2a2a" stroke-width="0.75"/><path d="M32 107.26 h11" stroke="#333" stroke-width="0.75"/><rect x="4" y="108.69" width="44" height="2.83" fill="#fde7cf"/><path d="M5 110.09 h12" stroke="#2a2a2a" stroke-width="0.75"/><path d="M32 110.09 h11" stroke="#333" stroke-width="0.75"/><path d="M5 112.92 h23" stroke="#2a2a2a" stroke-width="0.75"/><path d="M32 112.92 h11" stroke="#333" stroke-width="0.75"/><rect x="4" y="114.35" width="44" height="2.83" fill="#fde7cf"/><path d="M5 115.75 h12" stroke="#2a2a2a" stroke-width="0.75"/><path d="M32 115.75 h11" stroke="#333" stroke-width="0.75"/><path d="M5 118.58 h13" stroke="#2a2a2a" stroke-width="0.75"/><path d="M32 118.58 h9" stroke="#333" stroke-width="0.75"/><rect x="4" y="120.01" width="44" height="2.83" fill="#fde7cf"/><path d="M5 121.41 h18" stroke="#2a2a2a" stroke-width="0.75"/><path d="M32 121.41 h8" stroke="#333" stroke-width="0.75"/><path d="M5 124.24 h19" stroke="#2a2a2a" stroke-width="0.75"/><path d="M32 124.24 h11" stroke="#333" stroke-width="0.75"/><rect x="4" y="125.67" width="44" height="2.83" fill="#fde7cf"/><path d="M5 127.07 h23" stroke="#2a2a2a" stroke-width="0.75"/><path d="M32 127.07 h10" stroke="#333" stroke-width="0.75"/><path d="M5 129.90 h20" stroke="#2a2a2a" stroke-width="0.75"/><path d="M32 129.90 h11" stroke="#333" stroke-width="0.75"/><rect x="52" y="12.2" width="44" height="3" fill="#dc8a3a"/><path d="M53 16.70 h15" stroke="#2a2a2a" stroke-width="0.75"/><path d="M80 16.70 h10" stroke="#333" stroke-width="0.75"/><rect x="52" y="18.13" width="44" height="2.83" fill="#fde7cf"/><path d="M53 19.53 h21" stroke="#2a2a2a" stroke-width="0.75"/><path d="M80 19.53 h8" stroke="#333" stroke-width="0.75"/><path d="M53 22.36 h25" stroke="#2a2a2a" stroke-width="0.75"/><path d="M80 22.36 h8" stroke="#333" stroke-width="0.75"/><rect x="52" y="23.79" width="44" height="2.83" fill="#fde7cf"/><path d="M53 25.19 h18" stroke="#2a2a2a" stroke-width="0.75"/><path d="M80 25.19 h10" stroke="#333" stroke-width="0.75"/><path d="M53 28.02 h23" stroke="#2a2a2a" stroke-width="0.75"/><path d="M80 28.02 h9" stroke="#333" stroke-width="0.75"/><rect x="52" y="29.45" width="44" height="2.83" fill="#fde7cf"/><path d="M53 30.85 h22" stroke="#2a2a2a" stroke-width="0.75"/><path d="M80 30.85 h10" stroke="#333" stroke-width="0.75"/><path d="M53 33.68 h14" stroke="#2a2a2a" stroke-width="0.75"/><path d="M80 33.68 h10" stroke="#333" stroke-width="0.75"/><rect x="52" y="35.11" width="44" height="2.83" fill="#fde7cf"/><path d="M53 36.51 h22" stroke="#2a2a2a" stroke-width="0.75"/><path d="M80 36.51 h10" stroke="#333" stroke-width="0.75"/><path d="M53 39.34 h17" stroke="#2a2a2a" stroke-width="0.75"/><path d="M80 39.34 h8" stroke="#333" stroke-width="0.75"/><rect x="52" y="40.77" width="44" height="2.83" fill="#fde7cf"/><path d="M53 42.17 h16" stroke="#2a2a2a" stroke-width="0.75"/><path d="M80 42.17 h10" stroke="#333" stroke-width="0.75"/><path d="M53 45.00 h27" stroke="#2a2a2a" stroke-width="0.75"/><path d="M80 45.00 h9" stroke="#333" stroke-width="0.75"/><rect x="52" y="46.43" width="44" height="2.83" fill="#fde7cf"/><path d="M53 47.83 h13" stroke="#2a2a2a" stroke-width="0.75"/><path d="M80 47.83 h8" stroke="#333" stroke-width="0.75"/><path d="M53 50.66 h24" stroke="#2a2a2a" stroke-width="0.75"/><path d="M80 50.66 h8" stroke="#333" stroke-width="0.75"/><rect x="52" y="52.09" width="44" height="2.83" fill="#fde7cf"/><path d="M53 53.49 h19" stroke="#2a2a2a" stroke-width="0.75"/><path d="M80 53.49 h10" stroke="#333" stroke-width="0.75"/><path d="M53 56.32 h20" stroke="#2a2a2a" stroke-width="0.75"/><path d="M80 56.32 h11" stroke="#333" stroke-width="0.75"/><rect x="52" y="57.75" width="44" height="2.83" fill="#fde7cf"/><path d="M53 59.15 h25" stroke="#2a2a2a" stroke-width="0.75"/><path d="M80 59.15 h9" stroke="#333" stroke-width="0.75"/><path d="M53 61.98 h13" stroke="#2a2a2a" stroke-width="0.75"/><path d="M80 61.98 h8" stroke="#333" stroke-width="0.75"/><rect x="52" y="63.41" width="44" height="2.83" fill="#fde7cf"/><path d="M53 64.81 h27" stroke="#2a2a2a" stroke-width="0.75"/><path d="M80 64.81 h10" stroke="#333" stroke-width="0.75"/><path d="M53 67.64 h18" stroke="#2a2a2a" stroke-width="0.75"/><path d="M80 67.64 h9" stroke="#333" stroke-width="0.75"/><rect x="52" y="69.07" width="44" height="2.83" fill="#fde7cf"/><path d="M53 70.47 h16" stroke="#2a2a2a" stroke-width="0.75"/><path d="M80 70.47 h11" stroke="#333" stroke-width="0.75"/><path d="M53 73.30 h15" stroke="#2a2a2a" stroke-width="0.75"/><path d="M80 73.30 h9" stroke="#333" stroke-width="0.75"/><rect x="52" y="74.73" width="44" height="2.83" fill="#fde7cf"/><path d="M53 76.13 h25" stroke="#2a2a2a" stroke-width="0.75"/><path d="M80 76.13 h10" stroke="#333" stroke-width="0.75"/><path d="M53 78.96 h16" stroke="#2a2a2a" stroke-width="0.75"/><path d="M80 78.96 h8" stroke="#333" stroke-width="0.75"/><rect x="52" y="80.39" width="44" height="2.83" fill="#fde7cf"/><path d="M53 81.79 h25" stroke="#2a2a2a" stroke-width="0.75"/><path d="M80 81.79 h10" stroke="#333" stroke-width="0.75"/><path d="M53 84.62 h16" stroke="#2a2a2a" stroke-width="0.75"/><path d="M80 84.62 h11" stroke="#333" stroke-width="0.75"/><rect x="52" y="86.05" width="44" height="2.83" fill="#fde7cf"/><path d="M53 87.45 h17" stroke="#2a2a2a" stroke-width="0.75"/><path d="M80 87.45 h11" stroke="#333" stroke-width="0.75"/><path d="M53 90.28 h27" stroke="#2a2a2a" stroke-width="0.75"/><path d="M80 90.28 h10" stroke="#333" stroke-width="0.75"/><rect x="52" y="91.71" width="44" height="2.83" fill="#fde7cf"/><path d="M53 93.11 h27" stroke="#2a2a2a" stroke-width="0.75"/><path d="M80 93.11 h10" stroke="#333" stroke-width="0.75"/><path d="M53 95.94 h21" stroke="#2a2a2a" stroke-width="0.75"/><path d="M80 95.94 h11" stroke="#333" stroke-width="0.75"/><rect x="52" y="97.37" width="44" height="2.83" fill="#fde7cf"/><path d="M53 98.77 h24" stroke="#2a2a2a" stroke-width="0.75"/><path d="M80 98.77 h9" stroke="#333" stroke-width="0.75"/><path d="M53 101.60 h15" stroke="#2a2a2a" stroke-width="0.75"/><path d="M80 101.60 h11" stroke="#333" stroke-width="0.75"/><rect x="52" y="103.03" width="44" height="2.83" fill="#fde7cf"/><path d="M53 104.43 h17" stroke="#2a2a2a" stroke-width="0.75"/><path d="M80 104.43 h11" stroke="#333" stroke-width="0.75"/><path d="M53 107.26 h22" stroke="#2a2a2a" stroke-width="0.75"/><path d="M80 107.26 h9" stroke="#333" stroke-width="0.75"/><rect x="52" y="108.69" width="44" height="2.83" fill="#fde7cf"/><path d="M53 110.09 h14" stroke="#2a2a2a" stroke-width="0.75"/><path d="M80 110.09 h11" stroke="#333" stroke-width="0.75"/><path d="M53 112.92 h20" stroke="#2a2a2a" stroke-width="0.75"/><path d="M80 112.92 h10" stroke="#333" stroke-width="0.75"/><rect x="52" y="114.35" width="44" height="2.83" fill="#fde7cf"/><path d="M53 115.75 h14" stroke="#2a2a2a" stroke-width="0.75"/><path d="M80 115.75 h10" stroke="#333" stroke-width="0.75"/><path d="M53 118.58 h13" stroke="#2a2a2a" stroke-width="0.75"/><path d="M80 118.58 h10" stroke="#333" stroke-width="0.75"/><rect x="52" y="120.01" width="44" height="2.83" fill="#fde7cf"/><path d="M53 121.41 h23" stroke="#2a2a2a" stroke-width="0.75"/><path d="M80 121.41 h10" stroke="#333" stroke-width="0.75"/><path d="M53 124.24 h27" stroke="#2a2a2a" stroke-width="0.75"/><path d="M80 124.24 h10" stroke="#333" stroke-width="0.75"/><rect x="52" y="125.67" width="44" height="2.83" fill="#fde7cf"/><path d="M53 127.07 h21" stroke="#2a2a2a" stroke-width="0.75"/><path d="M80 127.07 h10" stroke="#333" stroke-width="0.75"/><path d="M53 129.90 h17" stroke="#2a2a2a" stroke-width="0.75"/><path d="M80 129.90 h8" stroke="#333" stroke-width="0.75"/><path d="M8 135 h26" stroke="#a04818" stroke-width="0.9"/><path d="M84 135 h12" stroke="#a04818" stroke-width="0.9"/></svg>
<div class="t" style="left:283px;top:178.84px;font-size:12px;color:#444;letter-spacing:0.05px;">Split a page into columns.</div>
<div class="r" style="left:162px;top:323px;width:284px;height:1px;background:#d6d6d6;"></div>
<svg class="r" style="left:170px;top:332px;" width="16" height="16" viewBox="0 0 16 16"><circle cx="8" cy="8" r="8" fill="#6a9bd1"/><text x="8" y="12.5" font-size="12" font-weight="bold" fill="#fff" text-anchor="middle" font-family="Liberation Sans">?</text></svg>
<div class="t" style="left:192px;top:334.44px;font-size:12px;color:#33629f;font-weight:bold;">Tell me more</div>
</body></html>
